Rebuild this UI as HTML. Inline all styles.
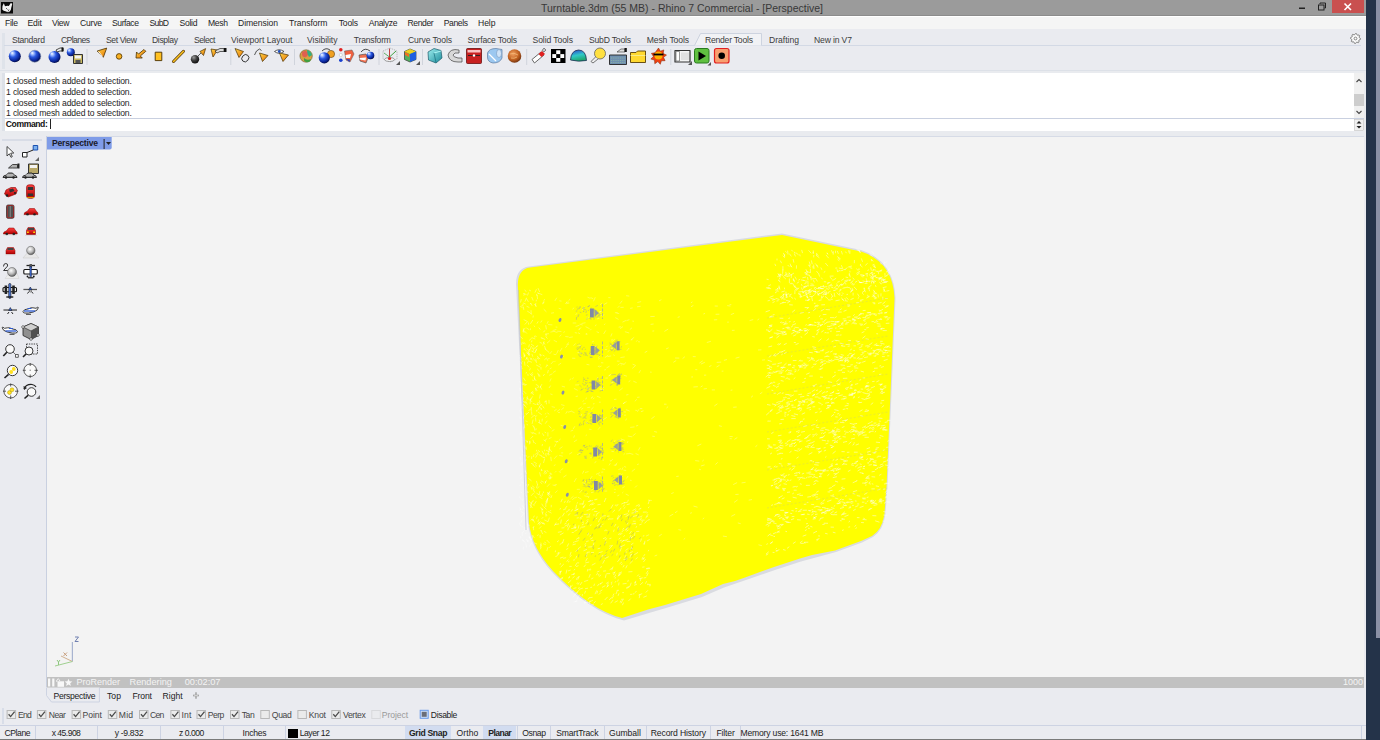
<!DOCTYPE html>
<html><head><meta charset="utf-8">
<style>
*{margin:0;padding:0;box-sizing:border-box}
html,body{width:1380px;height:740px;overflow:hidden;background:#243349}
body{position:relative;font-family:"Liberation Sans",sans-serif;color:#1e1e1e}
.a{position:absolute}
.t{position:absolute;white-space:nowrap}
svg{position:absolute;left:0;top:0;overflow:visible}
</style></head><body>
<div class="a" style="left:1376px;top:0px;width:4px;height:638px;background:#8a90a5;"></div><div class="a" style="left:0px;top:0px;width:1366px;height:740px;background:#eaebf0;"></div><div class="a" style="left:0px;top:0px;width:1366px;height:16px;background:#9b9b9b;"></div><div class="t" style="left:541.00px;top:3.17px;font-size:10.5px;line-height:10.5px;font-weight:normal;color:#383838;">Turntable.3dm (55 MB) - Rhino 7 Commercial - [Perspective]</div><div class="a" style="left:0px;top:16px;width:1366px;height:13px;background:#f5f5f5;"></div><div class="a" style="left:0px;top:15px;width:1366px;height:1px;background:#8c8c8c;"></div><div class="a" style="left:0px;top:16px;width:1366px;height:1px;background:#ffffff;"></div><div class="t" style="left:5.00px;top:19.20px;font-size:8.6px;line-height:8.6px;font-weight:normal;color:#1e1e1e;letter-spacing:-0.282px;">File</div><div class="t" style="left:27.50px;top:19.20px;font-size:8.6px;line-height:8.6px;font-weight:normal;color:#1e1e1e;letter-spacing:-0.112px;">Edit</div><div class="t" style="left:52.00px;top:19.20px;font-size:8.6px;line-height:8.6px;font-weight:normal;color:#1e1e1e;letter-spacing:-0.330px;">View</div><div class="t" style="left:80.00px;top:19.20px;font-size:8.6px;line-height:8.6px;font-weight:normal;color:#1e1e1e;letter-spacing:-0.240px;">Curve</div><div class="t" style="left:112.00px;top:19.20px;font-size:8.6px;line-height:8.6px;font-weight:normal;color:#1e1e1e;letter-spacing:-0.438px;">Surface</div><div class="t" style="left:149.50px;top:19.20px;font-size:8.6px;line-height:8.6px;font-weight:normal;color:#1e1e1e;letter-spacing:-0.667px;">SubD</div><div class="t" style="left:179.50px;top:19.20px;font-size:8.6px;line-height:8.6px;font-weight:normal;color:#1e1e1e;letter-spacing:-0.284px;">Solid</div><div class="t" style="left:208.00px;top:19.20px;font-size:8.6px;line-height:8.6px;font-weight:normal;color:#1e1e1e;letter-spacing:-0.342px;">Mesh</div><div class="t" style="left:238.00px;top:19.20px;font-size:8.6px;line-height:8.6px;font-weight:normal;color:#1e1e1e;letter-spacing:-0.079px;">Dimension</div><div class="t" style="left:289.00px;top:19.20px;font-size:8.6px;line-height:8.6px;font-weight:normal;color:#1e1e1e;letter-spacing:-0.046px;">Transform</div><div class="t" style="left:338.75px;top:19.20px;font-size:8.6px;line-height:8.6px;font-weight:normal;color:#1e1e1e;letter-spacing:-0.208px;">Tools</div><div class="t" style="left:368.75px;top:19.20px;font-size:8.6px;line-height:8.6px;font-weight:normal;color:#1e1e1e;letter-spacing:-0.311px;">Analyze</div><div class="t" style="left:407.50px;top:19.20px;font-size:8.6px;line-height:8.6px;font-weight:normal;color:#1e1e1e;letter-spacing:-0.392px;">Render</div><div class="t" style="left:443.75px;top:19.20px;font-size:8.6px;line-height:8.6px;font-weight:normal;color:#1e1e1e;letter-spacing:-0.413px;">Panels</div><div class="t" style="left:478.00px;top:19.20px;font-size:8.6px;line-height:8.6px;font-weight:normal;color:#1e1e1e;letter-spacing:-0.058px;">Help</div><div class="a" style="left:0px;top:29px;width:1366px;height:42px;background:#eaebf0;"></div><div class="a" style="left:2px;top:33px;width:3px;height:36px;background:#dfe3ea;"></div><div class="a" style="left:4px;top:45px;width:1357px;height:1px;background:#d3d9e5;"></div><div class="a" style="left:0px;top:70px;width:1366px;height:1px;background:#dde1e8;"></div><svg width="1380" height="740"><path d="M694.5 45.5 L700.5 33.5 L761.5 33.5 L761.5 45.5" fill="#f1f2f5" stroke="#cdd3df" stroke-width="1"/></svg><div class="t" style="left:12.00px;top:35.80px;font-size:8.6px;line-height:8.6px;font-weight:normal;color:#3c3c3c;letter-spacing:-0.274px;">Standard</div><div class="t" style="left:61.00px;top:35.80px;font-size:8.6px;line-height:8.6px;font-weight:normal;color:#3c3c3c;letter-spacing:-0.585px;">CPlanes</div><div class="t" style="left:106.00px;top:35.80px;font-size:8.6px;line-height:8.6px;font-weight:normal;color:#3c3c3c;letter-spacing:-0.400px;">Set View</div><div class="t" style="left:152.00px;top:35.80px;font-size:8.6px;line-height:8.6px;font-weight:normal;color:#3c3c3c;letter-spacing:-0.368px;">Display</div><div class="t" style="left:194.00px;top:35.80px;font-size:8.6px;line-height:8.6px;font-weight:normal;color:#3c3c3c;letter-spacing:-0.482px;">Select</div><div class="t" style="left:231.00px;top:35.80px;font-size:8.6px;line-height:8.6px;font-weight:normal;color:#3c3c3c;letter-spacing:-0.002px;">Viewport Layout</div><div class="t" style="left:307.00px;top:35.80px;font-size:8.6px;line-height:8.6px;font-weight:normal;color:#3c3c3c;letter-spacing:-0.046px;">Visibility</div><div class="t" style="left:353.75px;top:35.80px;font-size:8.6px;line-height:8.6px;font-weight:normal;color:#3c3c3c;letter-spacing:-0.203px;">Transform</div><div class="t" style="left:408.00px;top:35.80px;font-size:8.6px;line-height:8.6px;font-weight:normal;color:#3c3c3c;letter-spacing:-0.124px;">Curve Tools</div><div class="t" style="left:467.50px;top:35.80px;font-size:8.6px;line-height:8.6px;font-weight:normal;color:#3c3c3c;letter-spacing:-0.204px;">Surface Tools</div><div class="t" style="left:532.50px;top:35.80px;font-size:8.6px;line-height:8.6px;font-weight:normal;color:#3c3c3c;letter-spacing:-0.095px;">Solid Tools</div><div class="t" style="left:589.00px;top:35.80px;font-size:8.6px;line-height:8.6px;font-weight:normal;color:#3c3c3c;letter-spacing:-0.202px;">SubD Tools</div><div class="t" style="left:646.75px;top:35.80px;font-size:8.6px;line-height:8.6px;font-weight:normal;color:#3c3c3c;letter-spacing:-0.122px;">Mesh Tools</div><div class="t" style="left:705.00px;top:35.80px;font-size:8.6px;line-height:8.6px;font-weight:normal;color:#3c3c3c;letter-spacing:-0.230px;">Render Tools</div><div class="t" style="left:769.00px;top:35.80px;font-size:8.6px;line-height:8.6px;font-weight:normal;color:#3c3c3c;letter-spacing:-0.014px;">Drafting</div><div class="t" style="left:814.00px;top:35.80px;font-size:8.6px;line-height:8.6px;font-weight:normal;color:#3c3c3c;letter-spacing:-0.152px;">New in V7</div><div class="a" style="left:0px;top:71px;width:1366px;height:65px;background:#e9ebef;"></div><div class="a" style="left:2px;top:73px;width:3px;height:58px;background:#dde1e8;"></div><div class="a" style="left:5px;top:73px;width:1359px;height:45px;background:#ffffff;"></div><div class="a" style="left:5px;top:118px;width:1359px;height:1px;background:#c9d0e0;"></div><div class="a" style="left:5px;top:119px;width:1359px;height:12px;background:#ffffff;"></div><div class="a" style="left:1354px;top:73px;width:10px;height:45px;background:#f0f0f0;"></div><div class="t" style="left:6.00px;top:76.80px;font-size:8.6px;line-height:8.6px;font-weight:normal;color:#1e1e1e;letter-spacing:-0.126px;">1 closed mesh added to selection.</div><div class="t" style="left:6.00px;top:88.00px;font-size:8.6px;line-height:8.6px;font-weight:normal;color:#1e1e1e;letter-spacing:-0.126px;">1 closed mesh added to selection.</div><div class="t" style="left:6.00px;top:98.50px;font-size:8.6px;line-height:8.6px;font-weight:normal;color:#1e1e1e;letter-spacing:-0.126px;">1 closed mesh added to selection.</div><div class="t" style="left:6.00px;top:108.70px;font-size:8.6px;line-height:8.6px;font-weight:normal;color:#1e1e1e;letter-spacing:-0.126px;">1 closed mesh added to selection.</div><div class="t" style="left:5.80px;top:119.80px;font-size:8.6px;line-height:8.6px;font-weight:bold;color:#111;letter-spacing:-0.413px;">Command:</div><div class="a" style="left:50px;top:119px;width:1px;height:10px;background:#222;"></div><svg width="1380" height="740">
<defs>
<radialGradient id="gb" cx="40%" cy="38%" r="65%" fx="28%" fy="22%"><stop offset="0" stop-color="#ffffff"/><stop offset="0.2" stop-color="#9ab8ff"/><stop offset="0.45" stop-color="#2a58e0"/><stop offset="0.8" stop-color="#0a2496"/><stop offset="1" stop-color="#030a40"/></radialGradient>
<radialGradient id="gk" cx="35%" cy="30%" r="70%"><stop offset="0" stop-color="#9a9a9a"/><stop offset="0.5" stop-color="#404040"/><stop offset="1" stop-color="#111"/></radialGradient>
<radialGradient id="go" cx="40%" cy="35%" r="70%"><stop offset="0" stop-color="#f0a060"/><stop offset="0.6" stop-color="#c06020"/><stop offset="1" stop-color="#6a3010"/></radialGradient>
<radialGradient id="gw" cx="35%" cy="30%" r="70%"><stop offset="0" stop-color="#ffffff"/><stop offset="0.6" stop-color="#c8c8c8"/><stop offset="1" stop-color="#707070"/></radialGradient>
<linearGradient id="gy" x1="0" y1="0" x2="1" y2="1"><stop offset="0" stop-color="#ffd84a"/><stop offset="1" stop-color="#e87000"/></linearGradient>
<linearGradient id="gt" x1="0" y1="0" x2="1" y2="1"><stop offset="0" stop-color="#9ff0f0"/><stop offset="1" stop-color="#1a8a9a"/></linearGradient>
</defs>
<g stroke-linejoin="round">
<circle cx="14.8" cy="56.2" r="6" fill="url(#gb)"/>
<circle cx="34.8" cy="56.2" r="6" fill="url(#gb)" stroke="#8090b0" stroke-width="0.6"/>
<circle cx="54.5" cy="57" r="6" fill="url(#gb)"/>
<path d="M56 50 l4 -2 l3 0 l0 3 l-3 0 l-3 1z" fill="#eee" stroke="#222" stroke-width="0.8"/><rect x="61.5" y="47.5" width="2" height="4" fill="#111"/>
<circle cx="70.8" cy="52.3" r="4" fill="url(#gb)"/>
<rect x="73.5" y="54.5" width="9" height="9" fill="#c8b860" stroke="#333" stroke-width="1"/><rect x="75" y="55.5" width="6" height="3" fill="#f4f4f4"/><rect x="75.5" y="60" width="5" height="3" fill="#555"/>
<rect x="86.5" y="49" width="1" height="16" fill="#d0d4dc"/>
<path d="M97.2 51 L106.7 48.1 L103.3 57.3 Z" fill="url(#gy)" stroke="#4a3000" stroke-width="0.8"/><path d="M98.5 51.5 L102.5 56.5" stroke="#fff" stroke-width="1"/>
<circle cx="119.1" cy="56.4" r="2.8" fill="#f8b020" stroke="#4a3000" stroke-width="0.8"/>
<path d="M136 58 L136.5 52 L138.5 54 L144 49.5 L145.8 51.3 L140.3 56 L142.3 58 Z" fill="url(#gy)" stroke="#4a3000" stroke-width="0.8"/>
<rect x="155.2" y="52.2" width="6.6" height="8.4" fill="#ffc020" stroke="#4a3000" stroke-width="0.9"/>
<path d="M173.5 61.5 L183.5 51.3" stroke="#5a3a08" stroke-width="3" stroke-linecap="round"/><path d="M173.5 61.5 L183.5 51.3" stroke="#f8c020" stroke-width="1.6" stroke-linecap="round"/>
<circle cx="195" cy="59.2" r="4.2" fill="url(#gk)"/><path d="M197 57 L202 52" stroke="#333" stroke-width="0.8"/>
<path d="M200 51.5 L205.6 48.6 L203.5 55.5 Z" fill="url(#gy)" stroke="#4a3000" stroke-width="0.7"/>
<path d="M211 49 L217.5 50 L213 57 Z" fill="url(#gy)" stroke="#4a3000" stroke-width="0.7"/><path d="M215 51 l5 -2.5 l4 0 l0 3 l-4 0 l-3 1.5z" fill="#ddd" stroke="#222" stroke-width="0.7"/><rect x="224" y="48" width="2.5" height="4" fill="#111"/>
<rect x="230.3" y="49" width="1" height="16" fill="#d0d4dc"/>
<path d="M235 48.5 L243.5 51.5 L239 57.5 Z" fill="url(#gy)" stroke="#4a3000" stroke-width="0.7"/><ellipse cx="245.3" cy="58.2" rx="3.3" ry="3.8" fill="none" stroke="#333" stroke-width="0.9" transform="rotate(40 245.3 58.2)"/>
<path d="M254.5 55 l2 -4 l3 -2 l2 1.5" fill="none" stroke="#444" stroke-width="0.9"/><path d="M259.5 53 L268 55.5 L262.5 61.5 Z" fill="url(#gy)" stroke="#4a3000" stroke-width="0.7"/>
<path d="M274.5 51.5 Q279 48 284 51.5 Q279 55 274.5 51.5Z" fill="#fff" stroke="#333" stroke-width="0.8"/><circle cx="279.3" cy="51.5" r="1.4" fill="#2050c0"/><path d="M279.5 53 L288.5 55 L283 61.5 Z" fill="url(#gy)" stroke="#4a3000" stroke-width="0.7"/>
<rect x="294" y="49" width="1" height="16" fill="#d0d4dc"/>
<circle cx="306.1" cy="56" r="6.2" fill="#d8a040" stroke="#6a5a30" stroke-width="0.6"/><path d="M302 52 q3 -2 6 0 q1 3 -2 5 q-3 1 -4 -2z" fill="#e06050"/><path d="M307 50 q4 1 5 5 l-3 2 q-2 -3 -2 -7z" fill="#30b080"/><path d="M304 58 q3 3 7 1 l-1 2.5 q-4 2 -6 -1z" fill="#40a040"/>
<circle cx="331" cy="54" r="3.6" fill="#f0a020" stroke="#604010" stroke-width="0.6"/><circle cx="324.3" cy="57.8" r="5.6" fill="url(#gb)"/><path d="M322 51 q4 -4 8 -1" fill="none" stroke="#222" stroke-width="0.8"/>
<circle cx="340.8" cy="49.8" r="1.8" fill="#e02020"/><circle cx="340.8" cy="55" r="1.6" fill="#fff" stroke="#aaa" stroke-width="0.4"/><circle cx="340.8" cy="60.3" r="1.8" fill="#1840d0"/>
<path d="M344.5 51 L352 50 L354 54 L350 62 L346 60 Z" fill="#f06040" stroke="#555" stroke-width="0.5"/><path d="M345.5 55 L351 54 L350 58 L346 58Z" fill="#fff"/><path d="M346 59 L350 59.5 L349.5 62 Z" fill="#2040c0"/>
<path d="M359 55 L366 54 L368 58 L366 63 L360 61 Z" fill="#f07050" stroke="#444" stroke-width="0.6"/><path d="M359.5 58 L366 57.5 L365.5 60.5 L360 59.5Z" fill="#fff"/><circle cx="370.5" cy="55.5" r="3.8" fill="url(#gb)"/><path d="M361 52 q4 -5 9 -1" fill="none" stroke="#222" stroke-width="0.8"/>
<rect x="378.5" y="49" width="1" height="16" fill="#d0d4dc"/>
<path d="M383 51 L390 48 L397 51 L397 59 L390 62 L383 59Z" fill="none" stroke="#888" stroke-width="0.6" stroke-dasharray="1 1"/><path d="M389.5 57 L389.5 48.5" stroke="#c04040" stroke-width="1"/><path d="M389.5 57 L396 51" stroke="#40a040" stroke-width="1"/><path d="M389.5 57 L384 53" stroke="#40a040" stroke-width="0.8"/><ellipse cx="389.5" cy="59.5" rx="5" ry="2" fill="#f4f4f4" stroke="#666" stroke-width="0.6"/><circle cx="389.5" cy="58.5" r="1.6" fill="#e02020"/>
<path d="M396 65 L400 61 L400 65Z" fill="#555"/>
<path d="M404.5 51.5 L410 49 L416 51.5 L416 59.5 L410 62 L404.5 59.5Z" fill="#50b060" stroke="#333" stroke-width="0.7"/><path d="M404.5 51.5 L410 49 L416 51.5 L410 54Z" fill="#f0d020"/><path d="M410 54 L416 51.5 L416 59.5 L410 62Z" fill="#2060e0"/><path d="M405 52 L409 54 L409 57 L405 55Z" fill="#f07020"/>
<path d="M416 65 L420 61 L420 65Z" fill="#555"/>
<rect x="422" y="49" width="1" height="16" fill="#d0d4dc"/>
<path d="M428 52 L434 48.5 L441 50.5 L442 58 L436 63 L428.5 60Z" fill="url(#gt)" stroke="#1a5a6a" stroke-width="0.7"/><path d="M434 53 L441 51" stroke="#c0ffff" stroke-width="0.8"/><path d="M434 53 L436 62.5" stroke="#106070" stroke-width="0.6"/>
<path d="M459 50 Q450 48 448 55 Q449 62 458 62 L462 62 L462 58 L458 58 Q453 57 453 55 Q454 52 459 53Z" fill="#d8d8d8" stroke="#555" stroke-width="0.8"/>
<rect x="466.5" y="48.5" width="15" height="15" rx="1" fill="#c82020" stroke="#6a1010" stroke-width="0.8"/><rect x="467.5" y="50" width="13" height="2.5" fill="#f8c0c0"/><path d="M468 55.5 h12" stroke="#222" stroke-width="0.9"/><circle cx="474" cy="55.5" r="1.2" fill="#fff"/>
<path d="M487.5 53 Q489 48.5 496 48.5 L502 49.5 L502 58 Q500 63 493 63 Q487.5 62 487.5 57Z" fill="#9cc8f0" stroke="#5a7aa0" stroke-width="0.7"/><path d="M489 54 L496 61" stroke="#fff" stroke-width="1.2"/><ellipse cx="499" cy="53.5" rx="2.5" ry="4" fill="#d0e4f8" stroke="#6a8ab0" stroke-width="0.5"/>
<circle cx="514.5" cy="56" r="6.8" fill="url(#go)"/><path d="M510 54 q4 -2 8 1 M511 58 q3 1 6 -1" stroke="#f8c080" stroke-width="0.7" fill="none"/>
<rect x="526.2" y="49" width="1" height="16" fill="#d0d4dc"/>
<path d="M532 59.5 L541 52 L544 55 L534.5 63Z" fill="#fff" stroke="#444" stroke-width="0.8"/><path d="M538.5 54 L542 51 L545 54 L541.5 57Z" fill="#e02020"/><path d="M542 50.5 l2 -2.5 l2 2 l-2 2z" fill="#ccc" stroke="#444" stroke-width="0.6"/>
<rect x="551" y="49" width="14.5" height="14" fill="#000"/><rect x="556.2" y="50.3" width="4.1" height="3.8" fill="#fff"/><rect x="552.3" y="54.1" width="3.9" height="3.9" fill="#fff"/><rect x="560.3" y="54.1" width="3.9" height="3.9" fill="#fff"/><rect x="556.2" y="58" width="4.1" height="3.8" fill="#fff"/>
<linearGradient id="gd" x1="0" y1="0" x2="0.3" y2="1"><stop offset="0" stop-color="#2a40d0"/><stop offset="0.55" stop-color="#30c8c8"/><stop offset="1" stop-color="#20a870"/></linearGradient><path d="M570.5 60 Q571 50.5 578.5 50 Q586 50 586.5 60.5 Q578 62 570.5 60Z" fill="url(#gd)" stroke="#1a2a50" stroke-width="0.8"/>
<circle cx="600" cy="53.5" r="5.5" fill="#ffe040" stroke="#606060" stroke-width="0.8"/><path d="M595.5 57 L591 61.5 L593 63 L598 59" fill="#eee" stroke="#555" stroke-width="0.8"/>
<rect x="609.5" y="55" width="17" height="9.5" fill="#7090b0" stroke="#222" stroke-width="0.9"/><path d="M611 58 h14 M611 60.5 h14 M611 62.5 h14" stroke="#a0d0a0" stroke-width="0.5" stroke-dasharray="1 0.8"/><path d="M617 52 l4 -3 l4 0 l0 3 l-4 0z" fill="#ddd" stroke="#333" stroke-width="0.6"/><rect x="624.5" y="48" width="2.3" height="4" fill="#111"/>
<path d="M630.5 52.5 L636 52.5 L637.5 51 L645.5 51 L645.5 62.5 L630.5 62.5Z" fill="#ffd830" stroke="#5a4008" stroke-width="0.9"/><path d="M630.5 55.5 h15" stroke="#f8f0a0" stroke-width="0.8"/>
<path d="M658.5 48 l1.8 3.2 l3.5 -1.3 l-0.6 3.6 l3.3 1.6 l-3 2.2 l1.6 3.4 l-3.7 0.1 l-1.1 3.5 l-2.5 -2.7 l-3 2.2 l-0.3 -3.700 l-3.6 -1 l2.5 -2.7 l-2 -3.1 l3.6 -0.5z" fill="#f04010" stroke="#802000" stroke-width="0.5"/><circle cx="658.5" cy="55.5" r="4" fill="#ffb000"/><path d="M653.5 54.5 h10" stroke="#000" stroke-width="1.8"/>
<rect x="670.3" y="49" width="1" height="16" fill="#d0d4dc"/>
<rect x="675" y="50.5" width="15" height="11.5" fill="#f4f4f4" stroke="#333" stroke-width="1.2"/><rect x="676" y="51.5" width="3.5" height="9.5" fill="#fff" stroke="#555" stroke-width="0.6"/><rect x="681" y="52.5" width="8" height="7.5" fill="#e0e0e0"/>
<path d="M688 65 L692 61 L692 65Z" fill="#555"/>
<rect x="694.5" y="48.5" width="14.5" height="14.5" rx="2" fill="#60c040" stroke="#2a7a20" stroke-width="1"/><path d="M698.5 51.5 L706 56 L698.5 60.5Z" fill="#000"/>
<path d="M707.5 65.5 L711 62 L711 65.5Z" fill="#555"/>
<rect x="714.5" y="48.5" width="14.5" height="14.5" rx="2" fill="#f8a070" stroke="#e02020" stroke-width="1.2"/><circle cx="721.7" cy="55.7" r="3.3" fill="#000"/>
<path d="M1355.50 33.50 L1356.48 33.60 L1356.99 34.90 L1357.67 35.26 L1359.04 34.96 L1359.66 35.72 L1359.10 37.01 L1359.33 37.74 L1360.50 38.50 L1360.40 39.48 L1359.10 39.99 L1358.74 40.67 L1359.04 42.04 L1358.28 42.66 L1356.99 42.10 L1356.26 42.33 L1355.50 43.50 L1354.52 43.40 L1354.01 42.10 L1353.33 41.74 L1351.96 42.04 L1351.34 41.28 L1351.90 39.99 L1351.67 39.26 L1350.50 38.50 L1350.60 37.52 L1351.90 37.01 L1352.26 36.33 L1351.96 34.96 L1352.72 34.34 L1354.01 34.90 L1354.74 34.67Z" fill="#fafafa" stroke="#7a7a7a" stroke-width="0.9"/><circle cx="1355.5" cy="38.5" r="1.4" fill="none" stroke="#7a7a7a" stroke-width="0.9"/>
</g>
<rect x="1332" y="0" width="32" height="13" fill="#c9504f"/>
<path d="M1344.5 3.5 L1351 10 M1351 3.5 L1344.5 10" stroke="#fff" stroke-width="1.6"/><rect x="1299" y="7.5" width="6" height="1.5" fill="#222"/><rect x="1318.5" y="5" width="5.5" height="5" fill="none" stroke="#222" stroke-width="1"/><path d="M1320 4 v-1 h5.5 v5 h-1" fill="none" stroke="#222" stroke-width="1"/>
<rect x="1" y="2" width="12" height="11.5" fill="#0a0a0a"/><path d="M2.3 9.5 Q2 5.5 3.8 3.2 L5 6.3 Q7 5.2 8.8 6 L10.8 3 L12.3 3.8 L11.2 8 Q11 11.5 8 12.2 L5.5 11.3 Q3.5 11 2.3 9.5Z" fill="#f2f2f2"/><path d="M6 8 l1.5 1.5 M9 9.5 l-1 2" stroke="#222" stroke-width="0.7"/>
</svg>
<div class="a" style="left:46px;top:136px;width:1318px;height:541px;background:#f3f3f3;"></div><div class="a" style="left:46px;top:136px;width:1318px;height:1px;background:#d6dbe6;"></div><div class="a" style="left:46px;top:136px;width:1px;height:551px;background:#c9d0e0;"></div><svg width="1380" height="740"><path d="M47 137 H111.7 V147.6 Q111.7 149.6 109.7 149.6 H47Z" fill="#7f9ce8"/><rect x="103.6" y="139" width="1" height="10" fill="#222"/><path d="M106 142 h5 l-2.5 3z" fill="#222"/></svg><div class="t" style="left:52.00px;top:139.40px;font-size:8.6px;line-height:8.6px;font-weight:bold;color:#1a1a2a;letter-spacing:-0.229px;">Perspective</div><div class="a" style="left:46.5px;top:677px;width:1317.5px;height:10.5px;background:#c1c1c1;"></div><div class="t" style="left:76.50px;top:677.80px;font-size:9.0px;line-height:9.0px;font-weight:normal;color:#f4f4f4;">ProRender</div><div class="t" style="left:129.50px;top:677.71px;font-size:9.2px;line-height:9.2px;font-weight:normal;color:#f4f4f4;">Rendering</div><div class="t" style="left:184.70px;top:677.71px;font-size:9.2px;line-height:9.2px;font-weight:normal;color:#f4f4f4;">00:02:07</div><div class="t" style="left:1343.00px;top:677.80px;font-size:9.0px;line-height:9.0px;font-weight:normal;color:#f4f4f4;">1000</div><svg width="1380" height="740"><rect x="48" y="678.5" width="2.2" height="8" fill="#f8f8f8"/><rect x="52.2" y="678.5" width="2.2" height="8" fill="#f8f8f8"/><rect x="57.5" y="681.3" width="6.5" height="5.5" fill="#f8f8f8"/><path d="M56.8 682 v-2 q1.3 -2.5 2.8 0 v1" fill="none" stroke="#f8f8f8" stroke-width="0.9"/><path d="M68.5 678.8 l1.1 2.5 l2.8 0.2 l-2.2 1.8 l0.7 2.8 l-2.4 -1.5 l-2.4 1.5 l0.7 -2.8 l-2.2 -1.8 l2.8 -0.2z" fill="#f8f8f8"/></svg><svg width="1380" height="740"><path d="M46.5 687.5 V695.5 L51.5 702 H99.4 V687.5" fill="#eaebf0" stroke="#cdd3e2" stroke-width="1"/><path d="M193 695.5 h6 M196 692.5 v6" stroke="#888" stroke-width="1.6"/><path d="M193.5 695.5 h5 M196 693 v5" stroke="#f0f0f0" stroke-width="0.6"/></svg><div class="t" style="left:53.60px;top:691.60px;font-size:8.6px;line-height:8.6px;font-weight:normal;color:#222;letter-spacing:-0.293px;">Perspective</div><div class="t" style="left:107.00px;top:691.60px;font-size:8.6px;line-height:8.6px;font-weight:normal;color:#222;letter-spacing:0.077px;">Top</div><div class="t" style="left:132.50px;top:691.60px;font-size:8.6px;line-height:8.6px;font-weight:normal;color:#222;letter-spacing:-0.145px;">Front</div><div class="t" style="left:162.60px;top:691.60px;font-size:8.6px;line-height:8.6px;font-weight:normal;color:#222;letter-spacing:-0.020px;">Right</div><div class="a" style="left:2px;top:139px;width:40px;height:1.5px;background:#d8dce6;"></div><svg width="1380" height="740">
<defs>
<linearGradient id="car" x1="0" y1="0" x2="0" y2="1"><stop offset="0" stop-color="#ff4040"/><stop offset="1" stop-color="#b00000"/></linearGradient>
<radialGradient id="gs" cx="40%" cy="35%" r="65%"><stop offset="0" stop-color="#ffffff"/><stop offset="0.6" stop-color="#b8b8b8"/><stop offset="1" stop-color="#606060"/></radialGradient>
</defs>
<g stroke-linejoin="round">
<!-- row1 -->
<path d="M7 146.5 L7 156 L9.3 153.8 L11 157.3 L12.3 156.6 L10.7 153.2 L13.8 153 Z" fill="#fff" stroke="#333" stroke-width="0.9"/>
<rect x="22.5" y="152.5" width="4.5" height="4.5" fill="#fff" stroke="#222" stroke-width="1"/><rect x="33.2" y="145.5" width="4.5" height="4.5" fill="#7ab0f0" stroke="#1a50b0" stroke-width="1"/><path d="M27 152.5 L33.2 150" stroke="#222" stroke-width="1"/>
<path d="M35 161 L39 157 L39 161Z" fill="#666"/>
<!-- row2 -->
<path d="M8.5 168 l4 -3.5 l5 0 l0 3.5 l-5 0z" fill="#b0b0b0" stroke="#333" stroke-width="0.9"/><rect x="17.5" y="163.5" width="2" height="5" fill="#222"/>
<path d="M3 177.5 q0 -2 3 -2.3 l2.5 -2.2 l4 0 l2 2.2 q2.5 0.3 2.5 2.3z" fill="#909090" stroke="#222" stroke-width="0.9"/><path d="M6.5 175 h7" stroke="#e8e8e8" stroke-width="0.8"/><circle cx="6" cy="177.5" r="1.2" fill="#222"/><circle cx="13.5" cy="177.5" r="1.2" fill="#222"/>
<rect x="28.5" y="164" width="10" height="9.5" fill="#b8a868" stroke="#333" stroke-width="1"/><rect x="30" y="165" width="7" height="3" fill="#f4f4f4"/>
<path d="M22.5 177.5 q0 -2 3 -2.3 l2.5 -2.2 l4 0 l2 2.2 q2.5 0.3 2.5 2.3z" fill="#909090" stroke="#222" stroke-width="0.9"/><path d="M26 175 h7" stroke="#e8e8e8" stroke-width="0.8"/><circle cx="25.5" cy="177.5" r="1.2" fill="#222"/><circle cx="33" cy="177.5" r="1.2" fill="#222"/>
<!-- row3 -->
<path d="M4.5 194 L6 190 L11 187.5 L15.5 187.5 L17.3 190.5 L16 194 L8 197Z" fill="url(#car)" stroke="#800" stroke-width="0.6"/><path d="M9 189.5 L13 188.5 L14.5 191 L10 192.5Z" fill="#333"/><circle cx="7" cy="195.5" r="1.2" fill="#222"/><circle cx="15" cy="193" r="1.1" fill="#222"/>
<rect x="26.5" y="184.8" width="8" height="13.5" rx="2.5" fill="url(#car)" stroke="#800" stroke-width="0.6"/><rect x="27.8" y="187" width="5.4" height="3" fill="#333"/><rect x="27.8" y="193.5" width="5.4" height="2.5" fill="#333"/><path d="M27 197.5 h7" stroke="#f0c000" stroke-width="0.8"/>
<!-- row4 -->
<rect x="6.5" y="205" width="7.5" height="13.3" rx="1.5" fill="#d02020" stroke="#333" stroke-width="0.8"/><rect x="7.5" y="206" width="5.5" height="11.3" fill="#505050"/><path d="M10.25 206 v11.3" stroke="#aaa" stroke-width="0.6"/>
<path d="M24 214.5 q0 -2.5 3 -3 l2.5 -3 l5 0 l2 3 q1.5 0.3 1.5 3z" fill="url(#car)" stroke="#800" stroke-width="0.5"/><circle cx="27.5" cy="214.5" r="1.3" fill="#222"/><circle cx="34.5" cy="214.5" r="1.3" fill="#222"/><path d="M23 215.5 h15" stroke="#d8d8d8" stroke-width="0.5"/>
<!-- row5 -->
<path d="M3.3 234 q0 -2.5 3 -3 l2.5 -3 l5 0 l2 3 q1.5 0.3 1.5 3z" fill="url(#car)" stroke="#800" stroke-width="0.5"/><circle cx="6.8" cy="234" r="1.3" fill="#222"/><circle cx="13.8" cy="234" r="1.3" fill="#222"/><path d="M3 235.3 h14" stroke="#d8d8d8" stroke-width="0.5"/>
<path d="M26.5 234.5 v-4 l1.5 -3 h6 l1.5 3 v4z" fill="url(#car)" stroke="#800" stroke-width="0.5"/><rect x="28" y="228" width="6" height="2" fill="#444"/><rect x="27" y="231.5" width="1.8" height="1.5" fill="#ffd000"/><rect x="33.2" y="231.5" width="1.8" height="1.5" fill="#ffd000"/><path d="M25 235.5 h12" stroke="#d0d0d0" stroke-width="0.6"/>
<!-- row6 -->
<path d="M6 254 v-3.5 l1.5 -3 h6 l1.5 3 v3.5z" fill="url(#car)" stroke="#800" stroke-width="0.5"/><rect x="7.5" y="248" width="6" height="2" fill="#444"/><path d="M5 254.8 h11" stroke="#d0d0d0" stroke-width="0.6"/>
<path d="M23 258 L28 252 L34 252 L39 258Z" fill="#e8e8e8" stroke="#c8c8c8" stroke-width="0.5"/><circle cx="30.8" cy="250.5" r="4.2" fill="url(#gs)" stroke="#555" stroke-width="0.5"/>
<!-- row7 -->
<path d="M3.5 266.5 q0 -3 2.3 -3 q2.3 0 1.8 2.5 l-4 4.5 h4.3" fill="none" stroke="#222" stroke-width="0.9"/><path d="M5 278.5 L9 273 L17 273 L19 278.5Z" fill="#ececec" stroke="#d0d0d0" stroke-width="0.5"/><circle cx="12" cy="272" r="4.5" fill="url(#gs)" stroke="#555" stroke-width="0.5"/>
<path d="M26.5 265.5 h8.5" stroke="#222" stroke-width="1.3"/><rect x="29.5" y="264" width="2.5" height="4" fill="#555"/>
<rect x="23.8" y="269.5" width="13.5" height="4.5" rx="1" fill="#fff" stroke="#111" stroke-width="1.1"/><rect x="29.8" y="266.5" width="1.8" height="10" fill="#3a68d8" stroke="#111" stroke-width="0.4"/>
<path d="M28 277.8 h5.5" stroke="#111" stroke-width="1.2"/><circle cx="27.5" cy="276.5" r="0.9" fill="#111"/><circle cx="33.8" cy="276.5" r="0.9" fill="#111"/>
<!-- row8 -->
<rect x="3" y="287.5" width="13.5" height="4.2" rx="1" fill="#fff" stroke="#111" stroke-width="1.1"/>
<rect x="4.6" y="285.5" width="2.6" height="8.5" fill="#222"/><rect x="12.2" y="285.5" width="2.6" height="8.5" fill="#222"/>
<rect x="8.7" y="283.5" width="2.2" height="15" rx="1" fill="#4a78e0" stroke="#111" stroke-width="0.6"/>
<path d="M6.3 297 h7" stroke="#111" stroke-width="1.3"/>
<path d="M23.5 289.5 h13.5" stroke="#333" stroke-width="1.2"/><path d="M23.5 289.3 h13.5" stroke="#aaa" stroke-width="0.4"/><path d="M30.3 287 l1.7 3 h-3.4z" fill="#3a68d8" stroke="#111" stroke-width="0.5"/><path d="M27.5 293.5 l1.5 -2 M33 293.5 l-1.5 -2" stroke="#111" stroke-width="0.9"/><circle cx="30.3" cy="291" r="1" fill="#fff" stroke="#111" stroke-width="0.5"/>
<!-- row9 -->
<path d="M3.5 310 h13.5" stroke="#333" stroke-width="1.2"/><path d="M3.5 309.8 h13.5" stroke="#aaa" stroke-width="0.4"/><path d="M10.3 307.5 l1.7 3 h-3.4z" fill="#3a68d8" stroke="#111" stroke-width="0.5"/><path d="M7.5 314 l1.5 -2 M13 314 l-1.5 -2" stroke="#111" stroke-width="0.9"/>
<path d="M23 311.5 q1 -2.5 5 -2.5 l3 -1.2 h2 l3 0.5 l1.8 -1.3 l0.5 0.8 l-1.5 2.5 q-3 2.2 -8.5 2.7 h-3.5 q-1.8 -0.2 -1.8 -1.5z" fill="#fff" stroke="#111" stroke-width="0.8"/><path d="M24 311 h11" stroke="#2a58d0" stroke-width="1.3"/><path d="M27.5 308.5 h4" stroke="#2a58d0" stroke-width="1"/><path d="M26 314.3 h5" stroke="#111" stroke-width="0.8"/>
<!-- row10 -->
<path d="M17.5 331.5 q-1 -2.5 -5 -2.5 l-3 -1.2 h-2 l-3 0.5 l-1.8 -1.3 l-0.5 0.8 l1.5 2.5 q3 2.2 8.5 2.7 h3.5 q1.8 -0.2 1.8 -1.5z" fill="#fff" stroke="#111" stroke-width="0.8"/><path d="M16.5 331 h-11" stroke="#2a58d0" stroke-width="1.3"/><path d="M13 328.5 h-4" stroke="#2a58d0" stroke-width="1"/><path d="M14.5 334.3 h-5" stroke="#111" stroke-width="0.8"/>
<path d="M23 327 L31 323.5 L38.5 327 L38.5 335.5 L31 339.5 L23 335.5Z" fill="#909090" stroke="#222" stroke-width="0.8"/><path d="M23 327 L31 323.5 L38.5 327 L31 331Z" fill="#d0d0d0" stroke="#222" stroke-width="0.6"/><path d="M31 331 L38.5 327 L38.5 335.5 L31 339.5Z" fill="#505050"/><circle cx="23" cy="327" r="1.3" fill="#fff" stroke="#222" stroke-width="0.6"/><circle cx="31" cy="339" r="1.3" fill="#fff" stroke="#222" stroke-width="0.6"/><circle cx="38" cy="335" r="1.3" fill="#fff" stroke="#222" stroke-width="0.6"/>
<!-- row11 -->
<circle cx="10" cy="349" r="4.3" fill="#fafafa" stroke="#222" stroke-width="0.9"/><path d="M6.8 352.2 L3.3 356" stroke="#222" stroke-width="1.6"/><rect x="15.5" y="354.5" width="2.8" height="2.8" fill="#fff" stroke="#222" stroke-width="0.7"/><path d="M13 352 l2.5 2.5" stroke="#222" stroke-width="0.6"/>
<rect x="26.5" y="344" width="11" height="10" fill="none" stroke="#333" stroke-width="0.9" stroke-dasharray="1.4 1"/><circle cx="29" cy="351" r="4" fill="#fafafa" stroke="#222" stroke-width="0.9"/><path d="M26 354 L23 357" stroke="#222" stroke-width="1.6"/>
<!-- row12 -->
<circle cx="12.5" cy="370.5" r="5.2" fill="#fafafa" stroke="#222" stroke-width="0.9"/><circle cx="11.2" cy="372" r="1.9" fill="#ffe020"/><circle cx="13.8" cy="369" r="1.9" fill="#ffe020"/><path d="M8.6 374.4 L4.5 378" stroke="#222" stroke-width="1.6"/><circle cx="30.2" cy="370.3" r="6.3" fill="#fafafa" stroke="#333" stroke-width="0.8"/><path d="M30.2 363 v3 M30.2 374.5 v3.3 M22.8 370.3 h3 M34.5 370.3 h3.4" stroke="#333" stroke-width="0.8"/><circle cx="30.2" cy="370.3" r="0.7" fill="#888"/>
<!-- row13 -->
<circle cx="10.7" cy="391.2" r="6.8" fill="#fafafa" stroke="#333" stroke-width="0.8"/><path d="M10.7 383.5 v3 M10.7 395.5 v3.5 M3 391.2 h3 M15 391.2 h3.5" stroke="#333" stroke-width="0.8"/><circle cx="9.5" cy="392.5" r="2" fill="#ffe020" stroke="#998800" stroke-width="0.4"/><circle cx="12" cy="389.8" r="2" fill="#ffe020" stroke="#998800" stroke-width="0.4"/>
<circle cx="31.5" cy="392" r="4.3" fill="#fafafa" stroke="#222" stroke-width="0.9"/><path d="M28.3 395.2 L24.5 398.5" stroke="#222" stroke-width="1.6"/><path d="M24 389 q2 -5 8 -4.5 q3 0.5 4 2.5" fill="none" stroke="#222" stroke-width="1.2"/><path d="M23.5 386 l0.5 4 l3 -2z" fill="#222"/>
<path d="M36 399 L40 395 L40 399Z" fill="#666"/>
</g>
</svg>
<div class="a" style="left:2.4px;top:707.5px;width:2px;height:16px;background:#d8dde8;"></div><svg width="1380" height="740"><rect x="7.1" y="710.5" width="8.5" height="8" fill="#ebebeb" stroke="#b8b8b8" stroke-width="1" opacity="1"/><path d="M8.6 714.3 l2 2.3 l4 -5" fill="none" stroke="#4a4a4a" stroke-width="1.3"/><rect x="37.4" y="710.5" width="8.5" height="8" fill="#ebebeb" stroke="#b8b8b8" stroke-width="1" opacity="1"/><path d="M38.9 714.3 l2 2.3 l4 -5" fill="none" stroke="#4a4a4a" stroke-width="1.3"/><rect x="72.1" y="710.5" width="8.5" height="8" fill="#ebebeb" stroke="#b8b8b8" stroke-width="1" opacity="1"/><path d="M73.6 714.3 l2 2.3 l4 -5" fill="none" stroke="#4a4a4a" stroke-width="1.3"/><rect x="108.3" y="710.5" width="8.5" height="8" fill="#ebebeb" stroke="#b8b8b8" stroke-width="1" opacity="1"/><path d="M109.8 714.3 l2 2.3 l4 -5" fill="none" stroke="#4a4a4a" stroke-width="1.3"/><rect x="139.5" y="710.5" width="8.5" height="8" fill="#ebebeb" stroke="#b8b8b8" stroke-width="1" opacity="1"/><path d="M141.0 714.3 l2 2.3 l4 -5" fill="none" stroke="#4a4a4a" stroke-width="1.3"/><rect x="170.9" y="710.5" width="8.5" height="8" fill="#ebebeb" stroke="#b8b8b8" stroke-width="1" opacity="1"/><path d="M172.4 714.3 l2 2.3 l4 -5" fill="none" stroke="#4a4a4a" stroke-width="1.3"/><rect x="197.0" y="710.5" width="8.5" height="8" fill="#ebebeb" stroke="#b8b8b8" stroke-width="1" opacity="1"/><path d="M198.5 714.3 l2 2.3 l4 -5" fill="none" stroke="#4a4a4a" stroke-width="1.3"/><rect x="230.5" y="710.5" width="8.5" height="8" fill="#ebebeb" stroke="#b8b8b8" stroke-width="1" opacity="1"/><path d="M232.0 714.3 l2 2.3 l4 -5" fill="none" stroke="#4a4a4a" stroke-width="1.3"/><rect x="260.8" y="710.5" width="8.5" height="8" fill="#ebebeb" stroke="#b8b8b8" stroke-width="1" opacity="1"/><rect x="297.9" y="710.5" width="8.5" height="8" fill="#ebebeb" stroke="#b8b8b8" stroke-width="1" opacity="1"/><rect x="331.8" y="710.5" width="8.5" height="8" fill="#ebebeb" stroke="#b8b8b8" stroke-width="1" opacity="1"/><path d="M333.3 714.3 l2 2.3 l4 -5" fill="none" stroke="#4a4a4a" stroke-width="1.3"/><rect x="371.8" y="710.5" width="8.5" height="8" fill="#ebebeb" stroke="#b8b8b8" stroke-width="1" opacity="0.35"/><rect x="420.2" y="710.3" width="8" height="8" fill="#cfe0f8" stroke="#6a9ae8" stroke-width="1"/><rect x="421.7" y="711.8" width="5" height="5" fill="#6a6e78"/></svg><div class="t" style="left:18.00px;top:711.00px;font-size:8.6px;line-height:8.6px;font-weight:normal;color:#454545;letter-spacing:-0.754px;">End</div><div class="t" style="left:48.70px;top:711.00px;font-size:8.6px;line-height:8.6px;font-weight:normal;color:#454545;letter-spacing:-0.454px;">Near</div><div class="t" style="left:82.60px;top:711.00px;font-size:8.6px;line-height:8.6px;font-weight:normal;color:#454545;letter-spacing:-0.052px;">Point</div><div class="t" style="left:118.80px;top:711.00px;font-size:8.6px;line-height:8.6px;font-weight:normal;color:#454545;letter-spacing:0.177px;">Mid</div><div class="t" style="left:150.00px;top:711.00px;font-size:8.6px;line-height:8.6px;font-weight:normal;color:#454545;letter-spacing:-0.740px;">Cen</div><div class="t" style="left:181.40px;top:711.00px;font-size:8.6px;line-height:8.6px;font-weight:normal;color:#454545;letter-spacing:0.177px;">Int</div><div class="t" style="left:207.80px;top:711.00px;font-size:8.6px;line-height:8.6px;font-weight:normal;color:#454545;letter-spacing:-0.549px;">Perp</div><div class="t" style="left:241.70px;top:711.00px;font-size:8.6px;line-height:8.6px;font-weight:normal;color:#454545;letter-spacing:-0.373px;">Tan</div><div class="t" style="left:271.80px;top:711.00px;font-size:8.6px;line-height:8.6px;font-weight:normal;color:#454545;letter-spacing:-0.342px;">Quad</div><div class="t" style="left:308.70px;top:711.00px;font-size:8.6px;line-height:8.6px;font-weight:normal;color:#454545;letter-spacing:-0.124px;">Knot</div><div class="t" style="left:343.00px;top:711.00px;font-size:8.6px;line-height:8.6px;font-weight:normal;color:#454545;letter-spacing:-0.336px;">Vertex</div><div class="t" style="left:381.70px;top:711.00px;font-size:8.6px;line-height:8.6px;font-weight:normal;color:#9a9a9a;letter-spacing:-0.041px;">Project</div><div class="t" style="left:430.80px;top:711.00px;font-size:8.6px;line-height:8.6px;font-weight:normal;color:#222;letter-spacing:-0.347px;">Disable</div><div class="a" style="left:0px;top:725px;width:1366px;height:1px;background:#cdd3e3;"></div><div class="a" style="left:0px;top:739px;width:1366px;height:1px;background:#7a7a7a;"></div><div class="a" style="left:35.4px;top:726px;width:1px;height:13px;background:#cdd3e3;"></div><div class="a" style="left:97.4px;top:726px;width:1px;height:13px;background:#cdd3e3;"></div><div class="a" style="left:160.3px;top:726px;width:1px;height:13px;background:#cdd3e3;"></div><div class="a" style="left:222.6px;top:726px;width:1px;height:13px;background:#cdd3e3;"></div><div class="a" style="left:285.2px;top:726px;width:1px;height:13px;background:#cdd3e3;"></div><div class="a" style="left:404.7px;top:726px;width:1px;height:13px;background:#cdd3e3;"></div><div class="a" style="left:482.6px;top:726px;width:1px;height:13px;background:#cdd3e3;"></div><div class="a" style="left:516.5px;top:726px;width:1px;height:13px;background:#cdd3e3;"></div><div class="a" style="left:550.4px;top:726px;width:1px;height:13px;background:#cdd3e3;"></div><div class="a" style="left:603.5px;top:726px;width:1px;height:13px;background:#cdd3e3;"></div><div class="a" style="left:645.6px;top:726px;width:1px;height:13px;background:#cdd3e3;"></div><div class="a" style="left:710.4px;top:726px;width:1px;height:13px;background:#cdd3e3;"></div><div class="a" style="left:739.5px;top:726px;width:1px;height:13px;background:#cdd3e3;"></div><div class="a" style="left:1360.5px;top:726px;width:1px;height:13px;background:#cdd3e3;"></div><div class="a" style="left:405.2px;top:726px;width:46.3px;height:13px;background:#d2dcf0;"></div><div class="a" style="left:483.4px;top:726px;width:33px;height:13px;background:#d2dcf0;"></div><div class="a" style="left:288.2px;top:728.7px;width:9.5px;height:9.2px;background:#000;"></div><div class="t" style="left:4.40px;top:729.10px;font-size:8.6px;line-height:8.6px;font-weight:normal;color:#222;letter-spacing:-0.402px;">CPlane</div><div class="t" style="left:51.80px;top:729.10px;font-size:8.6px;line-height:8.6px;font-weight:normal;color:#222;letter-spacing:-0.554px;">x 45.908</div><div class="t" style="left:114.80px;top:729.10px;font-size:8.6px;line-height:8.6px;font-weight:normal;color:#222;letter-spacing:-0.341px;">y -9.832</div><div class="t" style="left:179.00px;top:729.10px;font-size:8.6px;line-height:8.6px;font-weight:normal;color:#222;letter-spacing:-0.485px;">z 0.000</div><div class="t" style="left:242.60px;top:729.10px;font-size:8.6px;line-height:8.6px;font-weight:normal;color:#222;letter-spacing:-0.265px;">Inches</div><div class="t" style="left:299.70px;top:729.10px;font-size:8.6px;line-height:8.6px;font-weight:normal;color:#222;letter-spacing:-0.451px;">Layer 12</div><div class="t" style="left:409.00px;top:729.10px;font-size:8.6px;line-height:8.6px;font-weight:bold;color:#222;letter-spacing:-0.326px;">Grid Snap</div><div class="t" style="left:456.50px;top:729.10px;font-size:8.6px;line-height:8.6px;font-weight:normal;color:#222;letter-spacing:0.075px;">Ortho</div><div class="t" style="left:488.30px;top:729.10px;font-size:8.6px;line-height:8.6px;font-weight:bold;color:#222;letter-spacing:-0.575px;">Planar</div><div class="t" style="left:522.30px;top:729.10px;font-size:8.6px;line-height:8.6px;font-weight:normal;color:#222;letter-spacing:-0.407px;">Osnap</div><div class="t" style="left:556.20px;top:729.10px;font-size:8.6px;line-height:8.6px;font-weight:normal;color:#222;letter-spacing:-0.196px;">SmartTrack</div><div class="t" style="left:609.00px;top:729.10px;font-size:8.6px;line-height:8.6px;font-weight:normal;color:#222;letter-spacing:-0.023px;">Gumball</div><div class="t" style="left:650.80px;top:729.10px;font-size:8.6px;line-height:8.6px;font-weight:normal;color:#222;letter-spacing:-0.130px;">Record History</div><div class="t" style="left:716.50px;top:729.10px;font-size:8.6px;line-height:8.6px;font-weight:normal;color:#222;letter-spacing:-0.158px;">Filter</div><div class="t" style="left:740.50px;top:729.10px;font-size:8.6px;line-height:8.6px;font-weight:normal;color:#222;letter-spacing:-0.195px;">Memory use: 1641 MB</div><svg width="1380" height="740"><path d="M72.4 661.5 V642" stroke="#a8b4d0" stroke-width="1.2"/><path d="M72.4 661.5 L61 656" stroke="#d0b090" stroke-width="1"/><path d="M72.4 661.5 L55 666" stroke="#a0d090" stroke-width="1"/><path d="M75 637 h3.5 l-3.5 4.5 h3.5" fill="none" stroke="#7080b0" stroke-width="1"/><path d="M63.5 652.5 l3.5 3.5 M67 652.5 l-3.5 3.5" stroke="#c8a080" stroke-width="1"/><path d="M57 660 l1.5 2 l1.5 -2 M58.5 662 v3" fill="none" stroke="#90c880" stroke-width="1"/></svg><svg width="1380" height="740"><path d="M1356.5 82 l2.5 -2.5 l2.5 2.5" fill="none" stroke="#444" stroke-width="1.1"/><rect x="1354" y="94" width="10" height="12" fill="#cdcdcd"/><path d="M1356.5 111 l2.5 2.5 l2.5 -2.5" fill="none" stroke="#444" stroke-width="1.1"/><rect x="1354.5" y="119.5" width="9" height="11" fill="#f0f0f0" stroke="#c0c0c0" stroke-width="0.6"/><path d="M1356.5 123.5 l2.5 -2.5 l2.5 2.5z M1356.5 126 l2.5 2.5 l2.5 -2.5z" fill="#222"/></svg><svg width="1380" height="740"><path d="M529 266.5 L782 233.5 L861 250 Q894 261 895.5 298 L887.6 485 L885.4 514.6 Q883 531 873 537 L862 542.5 L836 552 L801 561.5 L775 570 L746 580 L724 587.5 L702 597 L666 608 L649 613 L624 620.5 Q590 612 552 572 Q531 549 528 523 L516 284 Q516 268 529 266.5Z" fill="#d9dbe1"/><path d="M530 267.5 L782 235 L861 251.5 Q893 262 894.5 298 L886.6 485 L884.4 514.6 Q882 530 872 536 L861 541 L835 550.5 L812 555 L800 558.5 L774 567 L745 577.5 L735 581 L723 584 L701 594 L665 605 L648 609.5 L622 618 Q590 610 553 571 Q532 548 529 523 L517.8 285 Q518 269 530 267.5Z" fill="#ffff00"/><path d="M530.5 328.4l-0.2 1.7M535.8 384.4l2.7 1.4M520.4 402.3l1.6 0.8M532.7 504.4l1.8 1.2M540.1 535.1l0.0 2.7M546.7 364.7l1.5 1.1M528.7 501.1l2.4 2.2M540.4 386.0l0.1 1.7M522.2 342.2l-0.6 2.7M529.7 441.1l0.6 2.3M544.4 470.5l2.1 2.4M537.2 516.4l-0.7 2.3M532.2 485.9l2.3 1.8M521.9 462.2l-1.2 3.0M548.4 370.0l-0.8 3.2M539.7 406.8l-2.2 3.7M533.6 461.9l3.2 1.7M541.3 547.2l-1.1 2.1M531.0 463.3l2.7 1.1M523.7 319.6l3.4 1.7M523.3 352.5l1.6 3.8M522.4 404.7l0.3 4.1M545.4 513.5l1.6 2.2M532.2 519.2l-1.4 1.4M524.7 349.2l2.0 2.2M537.6 357.8l2.6 1.0M533.1 436.0l-2.5 2.6M536.7 449.8l-0.3 1.6M549.9 491.2l-2.2 3.2M531.1 392.8l2.9 1.8M521.3 306.8l1.4 1.4M530.0 303.3l1.8 0.7M521.4 383.7l3.8 1.6M538.8 327.6l1.6 2.0M532.8 320.0l-2.4 3.8M534.1 415.3l1.6 0.9M531.5 358.0l-1.0 1.7M520.6 536.3l0.2 1.9M537.1 294.8l0.5 4.4M546.8 470.0l1.6 2.0M525.1 488.8l0.4 3.8M531.6 346.0l-2.0 4.0M548.2 497.9l-1.8 3.3M526.9 423.9l0.7 1.4M519.8 361.3l2.2 2.8M550.9 546.0l-1.8 1.8M526.3 348.3l1.5 1.5M540.7 522.8l-1.5 2.5M539.4 497.0l3.0 1.7M549.6 492.0l-1.0 2.8M524.7 493.5l2.0 3.4M533.1 535.2l-0.6 1.9M525.3 327.8l-2.4 3.1M526.0 503.7l-2.6 2.3M530.6 432.2l1.3 0.9M550.8 456.8l0.5 4.3M534.4 515.7l-1.0 1.9M527.0 364.9l2.1 2.5M526.6 397.7l3.4 2.5M531.3 407.0l-0.0 4.2M533.2 527.1l0.5 3.1M536.4 293.9l0.6 2.0M519.0 496.8l2.2 1.9M542.4 433.4l1.6 2.6M536.4 493.1l2.7 1.7M528.5 360.6l-1.2 2.8M538.9 486.5l-1.8 2.2M539.3 419.7l0.5 3.5M534.0 426.5l0.9 4.2M543.2 517.1l-1.6 1.7M538.4 534.4l-1.0 1.6M522.9 404.4l1.9 1.1M523.2 462.1l-1.7 3.8M525.1 475.2l-0.3 1.9M546.7 540.0l3.0 3.2M534.2 415.4l-3.0 2.6M525.0 400.9l0.4 2.5M526.5 372.1l-0.4 1.5M536.6 404.0l2.3 0.9M538.0 422.2l3.9 2.1M544.3 542.0l1.9 1.2M520.7 491.8l1.2 1.5M534.1 526.0l-1.1 2.0M524.7 527.2l0.1 3.6M523.2 303.6l-0.6 2.7M522.5 532.0l-0.4 3.9M520.9 511.7l3.6 1.9M534.4 376.0l0.3 4.3M528.4 322.5l0.3 2.2M522.6 331.5l1.9 0.9M530.4 368.2l-0.9 2.2M535.6 335.6l0.7 1.4M528.5 292.5l-1.0 3.0M526.7 412.8l-1.2 1.3M545.8 400.4l0.7 3.9M533.1 419.6l-1.0 4.3M531.4 504.7l-0.9 3.3M532.1 379.9l1.7 0.8M521.6 481.9l1.3 1.5M523.7 507.3l-2.0 2.9M528.2 351.8l1.6 2.4M523.7 404.2l2.7 3.4M527.1 540.0l1.4 2.2M519.7 387.8l0.7 2.9M525.4 420.8l2.1 0.8M522.2 393.5l1.4 0.7M529.7 349.0l-0.0 3.1M544.6 459.0l-1.1 4.0M533.2 374.1l-1.5 1.3M541.4 456.4l3.6 1.7M549.2 451.2l-1.2 3.7M524.1 424.2l0.7 4.0M545.8 502.8l-0.0 4.2M541.3 469.7l1.1 1.2M522.6 382.7l3.4 2.2M538.0 451.5l-0.3 3.5M536.5 289.2l-1.6 3.4M536.2 428.3l-0.3 1.7M542.6 355.0l2.0 1.1M544.1 341.3l-1.4 4.2M535.4 387.7l0.8 3.5M544.7 449.6l-0.2 1.7M525.1 354.9l-0.8 2.3M537.1 292.7l2.0 1.1M541.7 468.8l-0.5 2.3M536.3 409.9l0.5 1.8M550.2 340.3l-3.2 2.9M521.6 407.4l-2.1 3.9M532.9 358.3l3.1 3.1M525.5 440.3l2.5 1.8M547.3 420.8l-2.1 2.9M527.2 522.6l0.3 1.5M519.8 416.7l0.7 2.3M523.4 377.7l2.1 3.4M520.5 484.4l-0.9 1.6M550.4 474.5l-1.5 1.9M533.2 391.1l-2.5 2.1M531.0 400.6l1.0 1.3M522.0 505.3l2.5 3.5M527.8 358.1l0.3 2.0M533.1 537.0l-2.3 3.2M541.3 526.3l-2.1 2.3M543.5 301.5l-0.9 2.7M543.6 456.9l1.0 1.3M534.1 377.8l2.1 3.1M540.9 366.9l0.1 2.7M523.9 330.5l3.0 3.0M537.3 345.5l-2.8 3.5M533.8 325.7l1.3 1.2M530.2 312.8l1.5 1.7M538.7 519.4l-0.9 2.6M532.7 425.1l1.1 2.3M522.7 361.5l-1.4 1.3M536.7 452.8l-1.2 1.8M528.1 353.3l1.1 2.6M551.0 510.0l-0.9 1.3M521.9 473.3l-1.8 2.3M538.0 288.1l1.7 3.9M547.2 511.6l-1.6 1.5M523.3 328.4l0.5 3.5M550.4 475.8l-0.5 3.8M532.9 432.6l3.5 1.6M527.6 528.0l-0.3 2.4M524.3 353.7l-0.4 3.6M523.4 306.7l0.4 3.2M532.4 347.4l-0.1 1.5M530.9 408.6l-2.4 2.4M547.5 412.7l1.5 1.7M550.3 472.6l0.9 1.3M535.6 464.3l0.8 2.1M540.8 530.0l1.1 1.2M531.0 398.3l-0.4 2.0M545.3 481.1l0.3 2.1M544.9 348.6l2.6 2.7M529.2 536.5l0.4 2.0M527.5 396.3l-0.7 4.3M523.1 390.7l3.1 3.2M523.3 302.9l2.4 1.2M549.4 517.6l-1.4 4.3M526.2 532.6l-0.5 1.5M540.7 387.3l1.1 2.3M524.7 289.7l1.5 2.1M532.1 502.4l-1.3 2.5M520.7 411.2l1.8 3.9M526.7 384.1l-1.0 1.3M533.4 500.3l-0.6 1.5M521.9 305.4l-1.5 1.7M543.3 522.6l1.1 2.0M549.5 449.0l2.3 2.9M528.4 361.0l3.5 1.3M549.9 454.3l-1.1 1.1M529.0 412.0l-3.1 3.1M531.9 353.9l0.9 2.8M546.6 480.3l-1.8 3.3M538.8 374.1l1.4 2.2M543.7 309.2l2.7 2.6M526.5 306.2l2.9 1.3M531.7 543.1l-2.6 3.6M527.2 311.1l2.6 1.6M541.8 405.2l1.8 2.0M540.5 463.4l-1.4 3.8M541.9 320.5l-1.2 2.0M538.5 386.0l-0.7 2.0M526.3 352.5l3.3 2.6M537.6 372.8l1.7 4.1M537.0 348.6l-1.6 3.1M536.3 501.1l-2.2 3.6M520.4 365.8l1.7 1.2M550.6 385.6l-1.6 2.4M528.9 491.6l-1.3 1.3M538.2 450.2l1.8 1.9M523.5 341.8l2.1 2.5M539.7 342.4l2.3 0.9M541.1 337.2l1.1 1.8M544.6 432.1l1.6 0.8M532.8 432.2l-0.2 1.8M524.8 469.7l0.8 2.2M529.0 536.5l1.7 2.7M532.7 396.4l-2.5 3.7M532.0 340.3l-0.6 2.0M519.5 522.6l1.3 3.7M532.7 518.6l0.5 1.9M520.7 431.3l-0.5 4.2M522.2 450.4l1.3 2.7M524.4 361.5l0.6 4.2M524.5 415.6l-2.0 3.9M527.8 321.3l-3.0 3.2M536.3 302.9l-1.8 2.0M549.4 450.4l-1.0 1.7M544.4 345.9l1.5 3.8M545.6 336.6l1.9 1.9M535.7 389.1l1.8 1.3M541.8 522.6l2.9 1.3M544.7 299.1l-0.9 1.6M539.3 431.8l-0.2 2.4M532.9 439.8l1.1 3.3M532.8 403.3l3.1 1.3M536.4 349.4l-1.4 3.6M534.5 335.8l0.4 1.8M522.9 401.2l2.4 1.5M536.4 299.7l-0.2 1.7M543.3 491.4l0.2 1.6M536.8 387.6l-1.3 1.4M548.0 547.1l-1.2 3.8M525.8 543.1l0.8 4.3M544.1 531.4l2.3 1.2M544.9 330.4l-1.4 1.8M545.7 325.2l0.7 4.2M526.5 357.1l0.4 2.4M519.5 336.0l3.3 2.7M540.3 521.6l2.9 2.5M523.8 426.7l-0.3 2.6M547.9 432.3l0.0 4.1M523.5 546.8l-0.3 2.7M546.7 357.8l-2.4 2.1M531.2 487.8l0.6 1.9M544.3 301.6l-1.1 2.0M540.5 544.1l-0.0 3.5M529.1 290.1l1.8 0.8M539.4 400.3l0.6 4.1M524.3 348.3l-0.2 1.6M519.0 381.6l2.2 1.4M527.2 440.7l-0.0 2.1M538.2 412.2l3.5 2.5M526.3 327.9l2.9 1.8M547.5 492.3l0.9 2.1M520.3 456.4l0.1 2.5M541.9 404.0l-2.5 2.7M526.6 524.3l2.8 1.3M531.3 350.9l3.4 1.7M521.1 432.5l-1.3 1.4M526.1 446.4l0.5 3.4M545.4 334.4l1.3 2.0M522.3 519.6l-1.5 3.3M520.7 508.2l-1.0 2.7M543.1 407.0l1.2 1.3M526.5 298.5l1.9 3.3M542.5 508.7l-0.6 2.2M538.4 402.0l-1.3 2.8M529.3 456.2l-1.5 1.5M529.0 349.3l-1.4 4.1M544.6 374.0l-1.4 2.0M527.8 524.2l-0.4 3.6M540.8 542.6l0.9 3.9M541.8 511.2l1.1 3.5M537.1 368.8l2.4 2.4M521.9 526.3l1.3 1.0M523.0 530.7l0.9 1.7M521.3 299.2l-0.8 3.3M540.9 480.8l2.9 1.5M532.6 500.7l-2.0 3.7M523.5 514.0l-2.8 3.3M522.8 343.0l1.3 0.9M547.3 499.1l-0.4 4.0M539.4 364.2l1.5 1.0M543.5 342.1l1.5 2.4M519.6 355.3l2.1 2.9M532.9 372.4l-2.2 2.1M546.0 450.2l2.5 1.1M533.1 489.4l1.7 3.2M537.7 345.6l-1.0 1.5M545.2 333.9l2.0 0.7M543.0 543.7l2.8 1.0M534.6 496.2l2.2 2.0M529.8 504.6l2.7 3.4M529.4 344.4l-0.7 2.9M521.8 454.5l3.4 1.9M542.4 493.3l-0.2 2.6M533.4 391.9l-1.1 1.4M527.5 357.2l-1.9 2.4M531.2 518.8l1.9 2.1M537.6 484.6l-1.2 3.2M529.6 373.7l3.1 2.5M540.1 482.0l2.1 1.8M543.6 439.8l2.4 1.7M547.4 351.0l1.8 1.6M541.7 508.7l1.5 1.2M527.8 373.9l0.3 2.0M531.8 338.0l-2.7 2.5M522.1 539.5l2.2 1.4M551.9 495.3l-0.9 2.7M525.4 455.3l1.8 1.1M531.7 297.0l1.5 3.6M542.3 418.7l-0.3 2.9M523.9 445.2l1.4 3.5M549.0 399.9l0.1 3.7M534.1 347.4l-1.2 4.0M545.7 470.5l-1.9 3.0M539.6 406.6l1.8 2.9M523.9 397.4l-1.5 3.3M539.7 353.7l0.9 2.7M540.3 394.3l-0.8 4.2M526.4 458.9l-1.1 2.4M534.3 542.8l2.8 1.3M526.2 492.1l-2.1 2.2M523.1 437.6l0.3 3.6M537.1 454.9l-1.5 2.7M531.9 535.2l2.5 2.5M530.7 487.0l3.7 2.5M530.6 303.6l1.6 2.2M519.8 397.1l1.2 3.4M530.0 357.6l2.5 2.7M548.7 425.6l2.7 2.8M531.0 344.0l3.1 2.2M545.5 453.4l0.8 3.1M526.4 539.1l1.6 3.0M545.9 501.0l0.6 2.3M538.2 321.4l-1.3 2.2M546.7 358.5l1.0 2.1M531.9 337.7l3.4 1.3M528.2 352.5l1.6 2.4M533.9 454.4l-0.4 2.6M547.9 511.3l3.6 1.8M547.4 492.7l3.2 2.4M538.2 293.1l4.1 1.6M540.2 354.5l1.6 1.0M527.0 491.0l0.9 1.7M547.3 494.5l3.2 2.7M539.8 491.1l-0.7 4.1M543.9 506.9l2.6 2.5M536.4 480.9l1.2 4.0M537.1 358.1l1.3 1.4M535.5 304.3l0.5 1.9M535.5 417.5l0.4 4.1M519.8 507.1l0.8 3.1M540.7 507.3l1.2 2.5M538.9 454.7l3.1 1.3M540.7 530.3l2.2 3.8M536.8 415.4l-1.0 1.3M542.0 450.8l2.0 3.6M531.5 411.5l0.5 3.8M526.2 401.7l1.0 3.0M547.1 365.0l-1.3 2.4M535.8 358.5l0.7 4.4M540.3 494.8l1.2 2.1M529.8 440.6l-0.4 3.8M522.2 476.6l-1.9 2.5M520.6 367.7l1.9 0.7M549.8 446.3l-0.6 3.8M549.2 447.4l-0.2 3.4M542.5 444.0l-0.4 2.1M541.7 408.2l-0.7 1.7M526.6 297.7l-1.7 3.9M541.9 384.2l-1.9 3.4M537.2 355.9l1.5 2.3M530.5 399.8l-0.5 4.3M520.9 437.2l1.7 0.8M546.8 438.5l-1.8 2.2M520.5 388.5l-0.1 4.3M533.3 315.5l-0.3 2.1M523.2 293.4l3.3 1.2M522.1 540.2l3.5 2.1M524.4 293.6l-0.6 2.1M541.8 337.9l3.4 1.7M543.1 511.6l-0.5 1.7M539.6 472.3l1.1 4.2M528.3 540.0l-0.4 1.5M520.9 458.4l-0.8 1.5M528.4 478.3l3.1 2.6M534.9 304.1l1.4 2.9M532.5 464.8l3.1 2.4M531.8 456.3l-0.3 2.7M533.7 493.0l-2.6 2.8M536.2 365.0l3.9 2.0M541.7 503.7l1.7 2.9M551.3 504.9l-0.1 2.4M533.0 519.3l1.5 3.2M539.8 521.9l-1.1 2.1M519.5 356.9l1.1 3.1M544.3 519.9l3.6 1.7M545.9 514.3l0.1 2.3M547.7 497.8l-0.9 4.1M531.0 310.2l0.2 3.9M527.1 484.2l-1.5 1.6M539.2 465.2l0.5 2.1M528.8 484.0l-1.2 2.6M523.2 498.7l-0.8 2.0M539.5 522.0l-1.8 2.5M534.5 442.5l1.5 1.4M525.1 470.8l1.4 2.9" stroke="#ffffff" stroke-width="0.6" opacity="0.6" fill="none"/><path d="M582.8 401.7l0.9 -1.3M638.9 373.1l1.7 -2.9M618.6 327.2l2.5 -0.5M593.5 301.3l1.8 -4.1M626.2 395.0l2.2 -0.5M617.3 381.5l3.5 1.6M622.2 493.1l1.1 -1.1M563.7 332.8l0.8 -1.5M596.0 474.4l4.0 -1.8M630.1 308.4l2.6 -0.5M555.2 492.8l2.3 -2.2M604.5 491.1l2.7 -0.1M585.6 326.7l4.0 2.0M565.2 303.8l1.8 -1.8M630.0 480.2l1.6 0.4M617.5 440.7l4.4 -0.4M548.1 324.5l4.3 0.4M607.5 356.6l3.7 -0.7M554.3 362.1l1.3 -1.3M590.1 330.3l1.3 -1.4M608.3 297.6l2.1 0.1M547.0 486.8l2.9 -3.2M626.5 478.4l1.6 -2.4M552.6 485.0l3.3 0.8M586.5 364.3l2.9 0.6M604.1 324.9l1.1 -1.2M611.6 410.1l2.3 -3.4M569.6 380.4l1.3 -1.9M623.9 364.8l1.8 -2.4M574.1 482.0l2.3 -3.8M549.3 478.5l2.1 -0.1M589.6 354.4l1.5 -1.5M577.8 497.1l3.7 2.1M553.5 354.1l1.6 0.6M613.3 354.8l1.4 0.7M621.2 365.5l0.8 -1.2M623.2 404.0l1.7 -2.2M630.7 340.0l1.9 -0.4M561.1 452.9l2.1 0.0M551.1 313.2l2.9 -0.5M569.2 337.5l3.6 -0.6M621.6 415.1l1.1 -1.3M613.8 378.6l1.7 0.1M620.0 363.2l4.0 1.0M590.5 297.6l2.7 1.1M626.6 351.1l2.5 -3.1M578.5 329.4l2.8 -1.8M544.1 402.2l2.8 -1.3M554.5 441.1l4.0 0.8M573.9 441.8l3.2 -2.0M549.5 473.3l2.7 1.3M593.0 404.0l1.5 -0.4M636.3 341.6l1.1 -1.4M568.4 463.3l0.7 -1.6M610.8 336.5l1.2 -3.1M598.9 402.2l1.8 0.0M627.2 442.9l0.8 -1.7M591.2 398.3l1.4 -1.2M581.5 323.5l4.0 -0.8M558.0 412.4l2.0 0.2M622.3 487.9l2.4 -1.4M622.9 403.8l3.7 -2.2M617.9 365.3l1.7 -1.8M584.3 495.8l4.2 0.8M621.8 470.1l1.3 -2.8M635.0 487.5l2.0 -2.0M604.3 370.0l1.6 -0.5M585.8 399.4l0.7 -1.8M635.6 453.5l3.1 1.4M621.1 476.0l1.5 0.5M604.8 349.5l2.3 -0.1M595.4 484.7l2.2 -0.3M593.4 383.4l2.1 1.0M573.1 429.1l1.7 -2.8M634.8 401.3l2.1 -2.0M595.2 326.2l1.0 -1.6M572.1 379.1l1.7 -1.5M551.7 406.6l3.2 0.8M598.0 429.7l2.3 -2.8M587.3 407.6l2.9 -0.4M573.5 345.8l2.0 -2.3M580.9 416.3l0.9 -2.4M625.4 344.3l2.9 -0.7M570.6 498.7l2.9 -2.5M558.7 308.3l2.7 0.8M549.2 375.3l3.3 -1.6M553.7 340.3l3.3 1.6M558.2 365.1l2.9 -2.0M602.1 468.9l3.0 0.6M613.7 447.2l2.9 0.3M618.7 439.9l1.8 0.7M626.1 295.7l3.2 0.4M591.0 492.7l2.7 -0.6M618.1 474.1l2.6 -0.4M586.8 388.8l2.4 0.1M581.1 409.5l2.1 -1.3M618.4 469.6l2.7 -1.0M561.6 358.7l1.8 -2.7M599.1 312.6l2.3 0.9M624.2 466.4l1.9 0.9M585.2 482.4l0.6 -1.5M596.9 396.2l3.5 1.4M594.7 500.1l2.9 -1.0M608.7 375.8l2.7 -1.8M576.8 489.4l3.1 -0.1M553.0 372.5l2.8 -1.6M598.2 474.7l2.7 1.3M585.7 422.4l2.2 1.3M594.6 463.2l1.5 -2.0M637.1 464.6l1.7 -0.6M627.8 436.0l4.4 0.9M628.7 382.2l1.4 -1.9M593.0 399.3l1.3 -1.6M603.0 419.9l3.7 -2.5M603.8 304.6l3.4 -1.9M573.7 437.7l0.8 -2.3M624.0 415.2l2.1 -0.1M591.0 409.6l2.5 -2.4M594.2 499.7l2.7 -0.6M555.6 327.0l1.8 0.2M552.6 330.6l3.8 -1.2M602.9 461.0l0.7 -1.4M616.9 361.1l2.6 0.1M560.0 351.5l2.1 -3.6M599.1 367.1l2.4 -1.1M548.1 478.0l4.3 -0.9M586.2 422.7l1.2 -1.2M631.8 471.5l3.3 -2.6M620.4 357.6l4.3 -0.7M591.1 490.6l1.9 -1.9M611.7 341.7l3.2 -2.6M590.3 458.2l1.4 -1.4M578.0 332.7l2.1 1.1M597.1 318.9l2.5 -0.8M582.2 310.1l2.1 -3.4M577.6 346.1l1.5 -1.8M566.3 302.2l2.5 -0.2M559.2 440.7l1.1 -2.0M622.5 322.1l3.6 -1.7M620.0 328.7l3.0 -2.1M579.4 493.1l2.8 -3.3M592.1 342.0l1.7 -0.8M610.6 347.9l3.1 1.1M578.9 345.7l2.1 -0.3M626.4 320.7l3.0 -1.0M569.2 454.1l3.0 -1.8M598.2 359.2l1.5 -0.9M560.4 470.5l2.8 -2.1M554.1 411.0l2.5 -1.7M572.4 309.2l1.7 -1.4M556.0 442.8l2.0 -1.8M629.4 453.2l3.9 1.3M556.9 353.3l1.4 -3.3M606.5 367.9l3.0 -1.7M610.2 345.6l2.5 0.6M603.6 334.0l2.2 -3.6M614.4 441.8l0.7 -1.5M559.4 336.5l2.0 -1.7M547.7 358.8l2.0 -0.2M623.6 411.9l2.3 0.1M585.7 435.7l1.2 -0.9M623.6 454.7l1.2 -1.1M625.7 420.5l0.9 -2.0M554.2 458.8l2.8 -3.2M614.9 312.7l2.7 -0.0M615.4 465.5l1.3 -1.2M633.3 381.2l3.3 1.4M613.8 465.3l2.8 -0.4M548.8 438.8l2.7 -1.4M632.4 321.1l1.6 0.2M610.6 461.3l2.3 -2.2M636.0 426.0l2.2 -0.6M549.7 368.9l1.8 -1.0M572.7 323.0l3.5 0.0M566.3 345.0l2.7 -0.9M632.3 368.4l3.2 -2.7M556.9 411.6l3.2 -2.4M596.0 452.3l2.1 -2.8M599.9 389.3l4.0 0.5M555.0 354.9l1.8 -1.2M549.6 354.0l2.3 -2.8M586.4 319.0l2.3 -1.8M579.1 330.1l0.7 -1.4M638.4 450.4l1.7 -3.2M637.4 411.8l1.5 -2.5M585.5 334.1l1.5 -0.4M630.2 427.4l4.3 -0.5M606.3 347.2l1.3 -1.4M546.5 453.5l2.3 0.6M560.6 425.3l4.1 1.1M559.2 455.4l3.6 0.8M574.8 332.6l2.4 0.5M578.3 409.1l3.3 -2.2M566.1 303.8l3.3 -0.8M620.8 438.9l4.1 1.5M591.3 398.4l1.4 -1.9M599.2 311.5l2.0 -0.0M586.7 494.5l0.8 -1.4M586.0 334.1l1.5 0.1M623.5 470.1l2.7 0.4M570.6 431.1l2.6 -0.9M575.2 385.0l4.0 -0.2M629.8 329.6l2.2 -1.8M598.0 367.0l1.1 -1.4M573.9 388.4l3.8 1.9M625.7 494.0l3.0 1.5M620.4 307.4l3.3 -0.1M571.9 411.5l2.7 1.3M604.8 357.6l3.4 -2.4M546.2 333.8l2.8 -0.1M551.7 431.3l2.7 -1.8M583.2 404.0l2.6 -0.6M554.4 331.5l3.0 1.0M555.0 472.4l1.3 -1.3M593.9 347.1l3.0 -1.1M565.7 413.7l1.6 -2.6M600.2 311.9l1.5 -0.8M585.0 472.5l3.5 -0.9M615.3 317.6l3.2 1.8M553.8 465.7l1.7 -1.0M635.3 410.3l1.9 0.2M617.8 307.7l1.8 -1.9M545.6 417.7l1.6 -1.8M610.6 381.8l3.2 1.1M625.9 409.6l3.8 1.5M559.4 448.9l3.1 -2.2M609.0 465.4l1.4 -2.2M614.2 489.3l1.6 0.1M600.5 315.9l3.8 -1.0M554.6 484.7l2.3 -0.1M561.8 386.2l3.2 0.8M554.8 301.0l2.0 -3.3M561.3 409.8l2.7 -2.3M579.7 324.1l3.0 0.9M609.8 460.4l1.4 0.6M575.6 326.6l3.9 -1.4M619.8 303.8l2.4 -3.1M608.6 375.9l1.8 -0.8M623.7 375.2l3.2 1.0M550.8 364.1l2.8 -3.1M600.2 305.0l1.6 -2.1M588.3 414.0l2.2 -1.3M544.9 414.2l1.3 -0.9M588.2 498.1l0.8 -1.8M607.6 351.9l2.2 -2.0M567.8 412.3l4.2 -1.3M637.4 302.5l3.7 -0.9M626.2 453.9l3.4 -0.4M577.4 352.4l4.1 0.7M632.7 435.9l2.9 -2.4M614.0 399.5l2.5 -0.3M596.8 379.4l1.1 -2.3M574.5 498.1l2.4 -1.0M567.3 343.7l1.6 -1.1M544.4 474.1l2.6 -1.2M598.5 357.7l1.0 -1.4M572.1 358.2l3.2 0.1M632.6 364.2l3.0 1.2M550.4 332.1l4.4 -0.9M577.1 454.7l3.7 -1.9M550.3 393.9l2.2 0.8M568.8 300.7l1.4 -1.9M611.0 340.3l1.8 -1.1M601.2 472.2l2.1 -0.2M613.9 492.6l1.7 -0.3M621.1 475.0l1.5 -1.1M561.2 404.6l3.3 1.0M631.2 339.6l3.0 -2.3M605.4 378.1l2.5 -0.1M549.8 381.5l1.4 -3.1M575.7 396.5l2.2 -0.4M587.5 297.2l2.9 1.2M637.0 306.8l3.6 -0.5M575.7 314.9l1.1 -1.6M616.5 313.1l2.7 0.5M594.5 416.1l3.4 -0.9M601.0 362.7l2.3 0.2M611.4 451.3l2.4 0.3M617.3 495.9l2.1 -1.0M594.3 488.5l0.8 -1.3M588.9 429.2l2.6 0.3M638.1 341.7l1.8 0.2M547.0 323.8l1.3 -2.7M596.6 331.7l2.4 1.1M557.1 331.2l4.3 0.3M559.3 300.8l2.2 0.3M637.1 397.4l2.5 -0.3M619.4 390.6l3.3 -2.6M554.5 446.9l1.5 -3.1M582.5 473.6l1.4 -2.9M582.4 482.7l3.1 1.4M565.3 347.6l2.0 -1.9M565.3 336.5l3.4 0.4M572.3 500.0l2.1 -2.4M558.8 471.6l2.2 0.7M615.5 464.5l1.9 -1.7M590.1 479.1l2.1 -2.9M599.7 388.3l4.1 -0.9M563.3 477.2l3.2 -2.1M624.9 331.7l4.3 1.3" stroke="#ffffff" stroke-width="0.6" opacity="0.5" fill="none"/><path d="M582.6 504.7l1.4 -4.2M569.0 578.2l0.6 -1.9M618.6 511.2l2.6 -3.4M622.3 592.6l1.6 -0.0M576.6 583.5l1.5 -0.7M602.3 525.0l1.3 -1.3M584.6 593.6l1.0 -2.8M567.2 546.6l1.5 -3.2M568.3 578.1l1.4 -1.2M587.3 552.3l2.5 -0.3M573.6 601.9l3.6 -0.6M580.5 519.3l0.9 -1.5M558.0 554.6l2.1 -2.3M587.9 501.8l3.1 -1.5M604.7 558.6l4.0 -1.9M637.2 576.3l1.6 -1.8M593.9 603.2l1.7 -2.0M593.2 515.0l1.5 -0.0M611.9 598.7l1.7 -2.9M590.4 526.1l0.8 -1.7M634.3 582.4l1.6 -0.2M619.6 534.8l2.8 -1.5M584.7 603.9l0.7 -3.7M634.2 554.8l3.8 -2.4M576.0 566.6l2.5 -0.9M621.3 542.3l2.6 -2.1M618.0 534.6l2.7 -1.5M575.1 566.1l2.2 -3.6M598.8 576.7l2.3 -1.8M574.5 515.1l3.1 -0.3M603.7 555.7l2.1 -0.6M570.1 587.5l2.5 -2.3M632.8 594.0l1.6 -0.3M590.3 587.6l1.8 -0.5M569.2 527.6l0.8 -2.4M630.7 555.4l1.3 -1.2M591.3 605.3l2.6 -1.2M599.5 584.1l1.8 -0.6M618.7 539.2l1.7 -1.4M589.7 536.3l1.0 -1.2M573.8 560.9l0.5 -2.0M622.6 529.7l1.3 -1.8M632.5 510.6l3.6 -2.0M572.6 544.9l3.2 -1.0M589.4 505.5l1.9 -1.8M621.5 532.3l2.3 -2.5M631.0 538.2l2.1 -2.4M641.0 520.2l3.6 -0.1M589.9 570.6l1.0 -1.4M625.6 540.8l2.4 -1.8M640.3 581.1l0.7 -3.2M597.6 548.8l2.7 -0.6M598.9 594.5l2.1 -2.1M602.0 587.4l3.3 -1.7M591.7 504.9l2.9 -1.4M627.7 581.9l0.7 -2.0M563.2 509.8l3.0 -1.1M558.9 572.1l2.7 -1.2M559.1 573.7l2.2 -2.4M648.9 585.9l1.9 -0.3M586.4 556.6l0.8 -4.4M580.4 528.5l1.3 -1.9M635.5 559.2l2.1 -1.7M557.9 532.3l3.8 -0.7M636.0 527.7l0.7 -1.5M604.9 540.3l2.2 -2.0M609.4 538.7l2.0 -0.6M642.0 559.6l0.6 -2.4M604.6 543.6l2.0 -1.4M580.0 585.1l2.0 -3.0M629.7 563.7l3.1 -3.0M596.9 593.6l0.7 -2.7M614.9 505.3l1.7 -0.3M610.1 519.1l3.2 -0.3M629.5 553.1l3.2 -1.6M582.1 522.4l1.9 -0.4M641.9 522.6l0.6 -1.7M628.3 601.1l2.4 -2.5M578.6 595.5l1.8 -0.8M559.9 575.0l0.9 -3.9M581.9 525.1l2.0 -1.4M607.0 516.3l2.5 -0.3M632.8 516.6l4.3 -1.2M591.1 504.8l2.2 -2.6M575.8 558.7l0.9 -2.8M623.4 545.5l1.7 -0.8M631.5 513.1l4.5 -0.5M643.5 556.3l1.4 -2.1M625.4 552.2l1.8 -0.2M599.7 591.6l2.6 -1.7M562.3 516.4l2.2 -3.6M634.5 523.9l1.6 -0.2M610.6 603.3l2.6 -3.4M616.5 506.4l1.7 -2.3M577.7 579.7l1.6 -3.5M582.6 507.8l1.5 -1.0M606.2 583.5l2.4 -1.5M557.7 555.5l1.1 -3.3M566.7 561.7l1.6 -2.1M617.1 519.2l1.7 -4.0M585.1 588.7l2.9 -0.5M568.2 510.0l1.8 -0.3M601.6 557.6l1.0 -2.7M569.6 557.1l2.0 -1.7M573.4 543.2l0.8 -1.7M576.2 592.8l3.2 -2.7M599.9 584.1l2.9 -2.0M576.3 579.8l0.9 -2.1M557.0 542.0l1.9 -1.5M638.7 509.5l1.8 -1.2M610.8 582.7l1.6 -0.7M577.5 562.9l1.6 -0.0M612.5 573.0l2.4 -0.6M631.2 548.6l1.5 -0.2M643.7 543.9l1.2 -1.3M577.4 577.5l1.8 -0.8M587.2 515.7l0.9 -1.9M584.5 602.5l3.9 -0.0M598.6 552.9l4.0 -1.3M625.7 568.3l1.5 -3.0M634.8 584.3l1.1 -3.5M586.4 517.1l3.5 -0.2M623.7 514.7l4.2 -1.0M639.1 578.7l3.8 -0.9M609.2 546.2l3.7 -0.9M636.2 531.5l3.1 -0.2M642.9 512.2l3.9 -0.2M578.4 588.9l1.0 -1.8M596.9 526.2l3.2 -2.7M618.8 576.0l2.5 -2.9M628.4 571.9l4.0 -0.3M591.8 510.1l3.5 -1.9M585.4 562.9l3.8 -0.9M555.2 552.2l0.4 -1.8M631.0 544.7l2.4 -1.5M585.6 524.0l2.5 -3.2M613.5 531.8l0.7 -2.2M619.9 547.3l3.5 -1.8M566.0 573.6l0.9 -3.9M571.2 528.6l2.6 -0.2M574.5 594.5l3.6 -2.2M591.0 552.6l3.0 -0.2M647.9 520.1l1.9 -0.5M604.2 502.0l1.8 -4.0M597.5 586.1l1.3 -2.2M563.1 558.3l3.0 -0.6M589.1 597.8l3.5 -0.5M560.7 567.1l3.1 -3.1M588.2 570.1l2.3 -1.3M603.1 571.2l3.0 -0.4M589.1 604.4l1.0 -3.9M618.6 559.8l2.7 -2.6M638.9 576.8l1.5 -0.5M583.8 514.5l4.2 -0.3M568.0 562.1l1.4 -0.9M591.2 579.0l2.1 -1.1M626.3 531.4l2.2 -1.6M646.2 568.6l3.4 -0.9M589.5 601.8l3.3 -1.4M579.7 518.1l3.3 -2.2M629.8 537.9l1.1 -2.8M637.4 517.4l1.9 -0.7M583.9 506.7l1.5 -2.2M571.7 532.6l2.1 -0.2M585.1 547.1l0.7 -2.2M591.3 540.5l2.3 -0.1M572.9 596.8l2.9 -2.8M615.0 582.6l1.1 -1.6M625.5 550.4l2.9 -2.0M625.2 530.6l2.7 -3.3M604.3 530.8l2.0 -1.1M626.7 504.7l3.1 -0.8M588.0 599.6l1.2 -1.9M560.0 558.2l3.3 -1.2M593.8 586.0l0.8 -2.3M614.7 602.4l3.1 -1.7M626.7 541.6l3.7 -0.3M586.2 541.6l2.5 -0.7M571.4 592.5l2.4 -1.9M618.1 595.8l0.9 -2.4M559.7 544.7l3.1 -2.6M617.4 561.9l2.2 -2.4M579.1 589.3l3.8 -1.2M567.9 571.0l2.8 -1.0M638.5 595.1l3.7 -1.4M616.0 594.0l1.3 -3.4M621.4 565.0l0.9 -1.4M611.8 587.5l1.1 -1.8M574.3 510.8l4.0 -1.9M630.4 538.1l1.6 -0.7M634.4 535.8l0.6 -3.3M567.8 530.3l0.7 -2.7M607.3 586.7l0.9 -3.9M564.4 524.2l2.2 -1.2M585.6 561.4l1.8 -3.4M573.4 588.5l3.0 -0.8M557.1 553.6l1.2 -1.2M613.7 576.8l2.3 -1.5M602.7 563.6l1.9 -3.6M648.3 584.5l2.5 -0.1M648.0 508.1l1.4 -1.3M596.8 572.2l2.6 -1.1M586.7 520.8l1.6 -1.7M572.4 578.2l2.2 -1.8M573.3 574.9l1.0 -2.1M606.4 573.7l3.7 -0.1M643.4 597.3l3.4 -1.4M560.6 523.6l0.8 -4.0M622.9 567.3l1.3 -2.2M569.3 566.4l2.4 -0.0M557.9 520.0l2.6 -3.3M631.1 548.6l0.6 -1.7M568.0 583.1l3.3 -3.0M640.1 584.8l3.0 -2.6M566.0 512.3l2.5 -1.7M574.5 528.5l0.9 -4.1M621.1 599.3l2.8 -0.1M622.6 540.9l3.9 -1.0M567.0 502.8l1.5 -2.9M589.1 501.4l3.8 -0.9M597.5 504.8l3.1 -0.5M559.9 535.0l3.6 -2.1M600.5 568.1l1.0 -2.0M640.5 541.7l1.0 -3.1M565.8 522.1l2.4 -2.2M614.9 574.8l1.2 -1.2M622.8 506.6l2.0 -1.8M618.1 576.4l1.7 -3.0M620.0 551.5l1.5 -3.9M610.8 508.5l2.2 -3.9M574.8 541.8l3.8 -1.2M615.0 578.7l0.4 -1.7M647.5 585.1l0.4 -1.6M577.0 599.3l1.6 -3.1M642.2 567.2l2.3 -0.3M568.7 502.2l1.7 -0.6M646.6 576.3l1.7 -3.6M569.9 555.6l1.2 -3.7M639.2 598.2l0.7 -4.0M606.5 587.3l2.6 -2.2M611.3 584.7l0.5 -1.6M606.3 531.1l1.0 -1.1M623.9 503.0l3.8 -0.9M597.6 513.3l1.9 -1.0M594.2 511.6l3.1 -0.1M586.6 510.6l3.8 -1.5M634.8 511.6l1.5 -1.9M625.5 516.7l3.8 -2.3M627.8 501.6l0.5 -1.8M619.7 563.8l2.2 -1.8M591.8 565.2l3.7 -2.0M622.6 583.9l4.0 -0.5M621.3 504.1l3.7 -1.7M595.0 594.2l1.8 -3.9M596.4 575.2l1.2 -2.1M587.7 535.4l0.9 -2.7M646.3 568.9l3.8 -0.4M625.8 530.0l1.4 -2.4M554.9 524.6l4.2 -0.7M584.2 581.5l4.0 -1.3M629.9 557.7l1.3 -3.8M583.8 567.0l2.0 -2.4M645.4 518.0l2.7 -2.1M604.7 600.0l2.9 -3.1M620.2 602.6l0.6 -2.0M582.1 596.3l0.4 -2.2M622.4 605.2l1.1 -2.6M618.5 573.2l3.5 -1.3M578.2 528.7l0.8 -3.5M573.2 527.3l3.4 -0.2M609.6 569.8l3.0 -1.9M583.7 507.5l0.4 -1.5M588.9 516.3l1.0 -2.8M646.1 573.8l2.0 -3.2M571.1 511.6l1.5 -2.3M619.7 547.0l1.7 -0.7M642.8 536.1l1.5 -0.4M631.8 524.1l3.8 -0.8M618.5 530.2l0.4 -2.0M639.5 517.3l2.9 -1.5M617.5 519.8l0.7 -1.7M646.9 541.0l2.8 -1.5M575.8 508.8l0.8 -4.0M588.9 577.7l1.4 -3.6M578.2 539.0l1.4 -1.1M577.9 584.7l1.4 -2.2M627.2 524.5l0.9 -1.9M590.2 539.1l2.6 -1.4M635.8 506.2l3.6 -1.8M576.7 503.7l1.3 -1.3M598.4 575.6l0.6 -1.8M599.9 519.5l1.3 -2.5M565.3 508.3l1.8 -2.3M643.7 559.3l0.6 -2.1M623.5 559.5l4.3 -0.8M635.0 511.7l3.1 -0.2M576.7 518.1l2.1 -0.4M561.5 528.0l2.9 -0.3M623.6 508.7l1.8 -1.7M573.9 570.3l1.2 -1.4M648.2 551.3l0.6 -1.4M616.7 555.5l0.6 -2.8M624.6 557.7l1.4 -2.6M611.7 570.2l1.4 -3.6M643.6 578.0l2.6 -0.5M640.0 520.5l1.6 -2.9M640.3 509.3l0.7 -1.4M595.9 516.4l1.6 -3.4M609.2 600.0l2.4 -2.6M575.5 551.5l3.4 -2.7M600.8 604.7l1.9 -1.1M632.8 521.2l2.9 -0.0M575.7 602.0l1.6 -2.2M587.3 571.5l0.5 -2.6M570.1 588.6l0.6 -3.3M578.0 548.7l3.0 -2.1M567.3 527.3l1.5 -4.1M567.9 515.4l2.5 -2.0M638.7 506.9l1.0 -1.8M609.2 549.0l2.8 -3.1M616.7 590.4l2.3 -0.1M644.0 544.9l1.0 -4.1M564.2 502.8l1.3 -2.0M645.8 592.5l2.1 -2.2M634.3 585.4l2.7 -1.4M564.6 526.3l2.9 -1.5M630.1 594.4l2.1 -0.1M608.1 519.5l2.1 -0.9M576.1 539.5l2.8 -2.2M560.7 578.6l2.5 -1.5M618.6 585.4l0.5 -2.9M618.5 574.9l1.8 -1.0M645.4 583.7l1.3 -2.5M644.5 523.4l3.0 -3.2M639.3 524.9l2.4 -0.9M617.6 581.5l0.7 -2.0M575.2 528.9l0.4 -1.9M593.1 545.7l0.9 -3.1M643.4 562.0l2.2 -2.8M596.0 518.9l1.2 -1.0M617.8 518.6l2.8 -3.4M626.4 588.5l3.0 -1.6M621.1 603.2l1.6 -3.4M582.0 527.3l3.2 -0.8M634.8 592.5l1.8 -1.1M555.4 556.6l2.1 -0.9M560.9 502.1l1.5 -3.3M554.4 525.7l1.9 -3.1M648.1 504.1l1.4 -4.1M646.2 516.8l1.8 -2.5M584.6 544.6l1.7 -1.5M559.9 509.6l0.7 -1.6M613.3 574.8l2.0 -3.3M623.4 536.6l1.6 -1.3M643.0 559.8l0.5 -1.9M619.8 540.9l2.0 -0.8M630.2 585.8l1.0 -3.1M571.3 574.8l3.7 -1.0M575.5 510.5l2.8 -1.4M567.4 520.7l1.5 -1.0M614.5 526.5l1.4 -2.4M605.3 577.9l0.8 -3.6M574.4 531.4l3.1 -1.7M612.9 595.8l1.1 -2.2M617.5 528.4l0.8 -2.0M626.3 587.7l4.0 -1.7M629.4 534.0l2.1 -3.0M560.0 564.8l0.5 -1.6M601.7 516.1l4.1 -0.4M598.4 522.2l1.0 -2.8M603.1 538.7l2.8 -1.2M628.3 512.4l0.7 -2.6M600.0 527.0l1.9 -1.0M583.5 550.8l3.5 -1.5M588.2 547.1l4.3 -0.4M612.5 512.2l2.5 -2.3M579.4 504.0l4.2 -0.1M566.2 549.5l2.1 -1.2M560.2 579.3l2.7 -0.9M562.5 543.4l1.3 -4.2" stroke="#ffffff" stroke-width="0.6" opacity="0.7" fill="none"/><path d="M573.0 525.1l1.2 -1.4M577.0 515.0l0.9 -3.0M627.8 520.3l1.1 -3.6M599.5 528.0l0.6 -2.2M637.4 517.6l1.3 -3.5M631.4 557.1l2.1 -3.8M611.4 526.0l1.7 -3.2M620.7 518.6l1.3 -4.2M577.0 551.7l0.9 -2.1M587.1 534.1l1.5 -1.3M629.3 527.8l1.1 -3.6M593.0 521.1l1.8 -3.5M630.1 540.6l0.7 -3.7M611.5 555.8l1.8 -1.7M628.9 552.2l0.9 -2.4M595.8 528.5l0.8 -1.7M585.1 557.0l1.5 -3.1M631.4 549.8l1.4 -4.0M625.1 561.0l2.4 -2.9M626.1 523.7l1.6 -2.1M628.1 517.7l1.3 -2.1M626.0 528.7l2.8 -2.9M630.1 518.2l2.8 -2.5M617.0 544.6l0.8 -4.0M607.6 534.5l1.5 -3.5M624.4 554.7l0.8 -2.4M587.1 515.7l0.6 -1.5M625.6 522.2l0.4 -1.7M621.2 521.1l1.3 -2.4M625.5 559.3l1.3 -3.1M631.3 534.8l2.7 -2.6M591.3 554.5l1.0 -1.5M610.4 552.7l1.5 -2.5M598.5 554.9l1.3 -1.7M594.0 529.4l2.7 -2.4M578.4 557.3l0.6 -3.2M599.9 546.7l0.8 -1.6M605.8 552.0l1.7 -1.9M584.8 548.0l1.4 -1.6M631.2 560.8l1.2 -2.3M619.3 557.6l0.7 -2.3M592.6 548.1l0.9 -3.0M604.4 545.5l1.2 -4.2M639.3 538.8l1.4 -1.5M632.4 539.1l2.7 -3.1M595.1 556.9l0.5 -1.5M603.6 556.4l3.1 -3.0M605.2 557.4l1.0 -1.6M613.4 551.6l1.5 -2.9M587.5 525.2l1.4 -2.7M602.6 515.9l0.4 -2.5M619.8 548.5l0.8 -2.1M605.0 520.5l2.4 -3.5M583.0 540.7l2.3 -2.9M619.1 547.4l1.4 -3.8M633.7 513.6l2.1 -1.9M574.9 514.8l2.4 -2.6M578.6 534.8l2.6 -3.7M593.2 549.3l0.7 -2.0M580.6 531.5l1.4 -2.0M581.1 521.9l0.5 -2.0M591.7 536.6l0.9 -2.8M599.7 560.5l2.1 -3.8M602.5 520.7l1.1 -1.6M580.5 515.4l2.7 -3.5M597.7 528.8l1.2 -2.3M617.8 531.6l1.1 -3.9M608.8 511.6l2.6 -2.7M593.8 542.4l2.0 -1.9M599.4 526.4l1.9 -3.0" stroke="#8890a8" stroke-width="0.6" opacity="0.6" fill="none"/><path d="M861.5 433.4l4.0 -1.6M832.3 377.4l3.4 -2.4M804.5 400.1l3.9 -1.4M843.4 399.1l3.2 -1.1M813.2 364.4l2.3 -0.4M806.8 502.3l1.6 -0.0M783.3 324.4l3.3 -1.6M832.8 532.2l2.7 0.7M789.7 480.5l1.7 -0.6M885.5 266.9l1.3 -0.9M852.5 445.2l1.7 -1.1M887.5 468.0l1.7 -1.0M808.1 477.2l3.5 -0.6M838.3 355.9l3.9 1.0M877.5 424.5l2.3 -1.4M861.9 502.2l2.5 -0.0M784.4 514.1l3.9 -1.8M783.6 483.7l3.2 0.7M818.2 535.9l1.8 0.1M819.2 473.6l3.4 0.1M777.4 404.5l3.0 -1.7M798.7 366.0l4.3 1.1M857.5 393.0l4.1 -1.3M823.2 291.7l3.0 -1.9M772.6 552.4l1.9 0.1M843.9 368.2l1.6 0.2M822.2 472.1l4.0 -1.6M788.8 296.7l1.7 -1.2M826.6 355.9l2.8 0.7M830.3 513.6l3.4 -2.5M815.0 305.8l2.9 -0.7M798.0 365.6l3.3 0.2M784.6 521.1l4.3 1.2M769.0 317.3l3.1 -1.4M887.4 459.7l1.2 -1.1M803.2 426.7l4.0 -1.2M838.0 503.6l1.8 -1.0M814.2 464.6l4.4 0.6M779.4 480.3l2.2 -1.4M841.5 451.6l3.2 0.1M782.3 302.8l3.9 -0.5M785.2 406.5l2.7 -0.4M773.0 382.2l2.2 0.1M866.2 328.0l2.6 -0.6M805.9 485.4l4.0 -0.1M839.7 310.2l2.0 -1.5M776.4 450.9l2.8 -1.2M880.1 329.1l2.3 -1.0M877.3 468.0l1.4 -0.9M784.9 443.4l2.5 -0.5M778.5 478.7l2.0 -0.4M777.0 527.3l2.4 -1.3M887.2 355.9l2.2 -0.1M777.7 407.1l3.0 -1.8M879.7 501.0l2.5 -1.6M779.0 352.2l3.6 -0.4M886.5 350.6l4.1 0.4M824.3 356.9l3.2 -0.6M859.8 467.0l2.2 -0.4M803.3 363.2l2.1 0.1M863.6 325.1l3.2 -2.3M797.9 401.2l4.0 0.8M870.8 388.1l4.1 -1.7M814.5 435.0l2.0 -1.7M848.6 444.1l2.7 -2.3M839.5 343.1l4.2 0.7M828.0 292.4l2.5 -1.1M810.3 526.3l2.1 0.7M862.7 498.8l2.9 0.2M885.9 272.2l3.0 -1.6M812.6 496.5l3.4 -1.7M777.4 394.6l1.3 -1.2M776.9 366.3l2.3 -0.5M785.7 409.4l3.8 -1.4M791.0 519.8l3.1 -1.2M834.5 340.1l2.5 0.7M809.3 376.1l3.5 -0.1M820.0 377.0l2.9 0.3M822.8 314.6l3.6 -0.2M797.6 449.1l2.0 -0.2M835.1 321.7l3.2 0.4M884.0 503.4l2.7 -1.9M767.2 522.7l3.5 0.5M830.8 514.3l2.5 0.5M768.8 357.3l2.7 -2.1M779.8 304.0l3.9 -1.8M879.3 499.4l1.6 -0.8M878.9 421.0l1.9 0.3M851.3 394.9l2.0 -0.5M814.1 322.1l2.5 0.7M827.3 405.8l3.7 0.2M872.1 363.1l3.4 -1.3M827.6 491.9l2.6 0.1M864.6 283.5l2.9 -0.2M812.3 429.4l1.4 -0.4M832.8 437.1l3.2 -2.2M800.7 514.7l3.9 -0.1M827.9 299.7l2.6 0.5M767.6 536.1l2.9 -2.4M835.3 416.8l2.4 0.2M854.4 323.8l2.6 -0.1M872.3 270.9l1.8 -1.4M776.2 402.9l2.6 -1.2M780.1 322.6l1.7 -0.7M813.4 348.7l2.9 0.8M866.4 398.9l4.0 -1.3M821.3 428.3l4.0 -0.6M822.5 294.4l3.7 0.0M806.3 294.4l3.5 -1.6M780.3 474.9l1.5 0.4M853.9 366.5l2.9 -0.9M815.6 292.7l4.0 -1.8M812.6 385.7l2.4 0.7M844.7 505.5l2.3 0.1M819.9 518.6l3.6 -1.0M773.0 533.9l3.3 -1.5M768.6 368.2l1.5 -0.4M784.6 322.6l1.7 -1.2M817.0 330.7l1.6 0.2M816.1 435.4l1.4 -1.0M850.3 432.5l2.7 -1.3M844.3 281.0l2.1 -0.5M779.7 408.1l2.6 0.1M775.2 515.6l3.0 -1.5M777.0 454.3l3.4 -0.8M849.6 267.6l2.6 0.7M834.4 409.6l4.2 1.1M822.0 507.5l3.6 0.2M803.1 365.6l4.0 0.6M847.6 306.4l2.1 -0.3M807.0 285.8l2.2 0.0M869.4 354.5l2.1 -0.9M818.8 369.1l2.6 0.4M766.4 544.4l1.4 -0.7M827.2 328.7l2.5 0.7M780.2 510.3l3.9 0.0M810.1 285.7l4.3 0.0M860.7 389.0l2.4 0.2M778.8 442.3l3.2 -1.6M874.7 293.7l2.4 -0.5M787.0 548.4l2.3 -1.7M860.8 432.1l2.7 -1.2M791.0 356.5l1.3 -1.0M816.7 506.2l3.9 1.1M837.4 430.1l2.2 -0.7M811.3 404.2l3.0 -2.2M862.6 435.3l4.1 -0.4M885.6 483.0l3.4 0.6M840.7 354.5l3.1 0.8M877.3 426.3l2.2 -1.9M841.3 399.2l3.6 -0.6M805.3 518.7l1.6 0.2M845.0 496.3l2.1 -0.7M807.3 497.1l3.8 -0.6M798.3 404.5l3.4 -2.1M773.8 354.9l2.0 -1.3M851.0 429.5l3.0 0.3M870.9 503.5l3.8 0.3M842.5 506.3l3.7 -1.5M877.3 349.4l4.0 -0.1M858.8 348.0l3.5 -1.6M822.9 501.2l2.1 -1.5M873.5 303.7l1.8 0.1M846.4 280.2l4.1 -0.2M815.9 390.7l2.1 -0.8M830.7 465.9l2.3 -0.8M800.3 477.9l2.2 -0.9M796.4 333.2l3.7 -0.8M874.0 368.3l3.7 -0.2M811.2 504.4l2.9 0.2M855.0 282.4l2.3 -1.3M815.6 361.8l3.7 -2.3M834.6 318.0l2.1 -1.4M861.1 522.5l2.8 0.2M831.2 416.5l2.8 -2.2M865.3 346.1l3.4 -0.5M819.7 326.1l3.4 -2.0M820.7 470.2l3.3 0.4M830.9 447.7l2.0 -0.8M853.5 345.8l2.4 0.0M766.9 519.3l2.6 -0.4M859.4 349.7l3.1 0.3M858.1 402.2l2.1 0.2M846.8 317.2l3.7 -0.4M780.3 481.8l1.8 -1.3M849.8 423.3l4.2 1.1M767.8 526.3l1.6 -0.9M810.4 291.7l2.9 -1.5M859.6 472.5l3.8 0.9M833.8 399.3l3.4 -2.3M840.4 284.5l1.6 0.3M789.1 469.4l1.7 -0.8M784.3 413.9l1.8 0.2M841.3 515.1l3.3 -1.8M874.8 315.1l1.8 0.5M838.7 286.2l3.1 -2.3M815.8 480.7l2.6 0.6M802.9 419.3l1.7 -0.4M869.7 458.3l4.2 1.2M882.1 279.8l3.3 0.1M838.0 501.6l3.3 -2.8M855.5 317.8l3.4 0.7M825.2 403.2l3.8 -0.8M782.0 519.2l2.0 -1.0M886.5 320.2l2.3 -0.9M780.7 380.5l2.9 0.7M873.0 464.9l2.4 0.1M854.0 317.2l3.8 -0.4M779.6 318.2l3.7 0.1M845.4 432.1l3.2 0.2M884.2 282.2l2.7 0.1M821.1 433.5l1.4 -0.7M795.0 331.6l2.9 0.3M812.3 324.9l4.0 0.7M852.8 394.4l2.9 -2.3M841.1 285.3l2.2 -0.6M879.2 475.4l2.2 -1.2M805.3 437.9l3.2 -1.0M843.5 359.0l2.6 -1.8M785.1 333.6l1.9 0.4M789.2 295.1l2.5 -1.0M812.3 336.5l2.5 0.5M851.3 394.2l1.8 -1.0M773.8 333.0l3.1 0.4M805.7 330.4l2.3 -1.1M874.2 452.5l1.5 -1.3M836.7 383.8l3.6 1.1M873.8 345.4l3.4 -2.0M800.6 336.8l1.6 0.5M839.6 360.9l4.1 -1.2M846.3 408.5l1.8 0.3M786.7 328.1l3.1 -0.7M771.2 505.5l1.8 -0.8M838.6 491.2l3.7 -1.7M862.6 378.0l2.5 -0.1M781.1 371.1l2.7 -0.4M862.6 280.9l4.0 1.0M862.3 427.7l1.6 -0.8M872.9 352.1l1.8 -0.3M872.7 350.4l3.6 0.2M810.9 358.1l2.9 0.4M864.2 357.6l3.7 -0.7M815.0 514.5l2.6 -0.4M803.5 280.3l1.6 0.4M776.5 532.8l2.9 -2.0M878.8 271.5l3.4 -1.8M872.6 461.4l3.9 -0.6M825.0 511.5l3.4 -1.3M844.9 269.6l2.5 -2.0M804.6 334.9l3.4 -2.6M867.7 423.8l3.0 -1.3M775.0 293.0l2.3 -1.6M793.3 322.1l1.5 -0.7M833.7 434.7l3.6 0.1M853.4 397.1l1.5 -0.7M821.8 440.1l4.1 0.7M870.1 501.3l2.0 -1.2M808.5 361.3l3.3 -2.3M837.1 503.8l3.6 -0.6M816.3 539.7l3.1 -1.1M777.3 532.0l2.5 -0.0M862.5 392.5l4.1 1.2M869.4 316.0l2.4 -2.0M837.7 385.2l2.9 -2.2M781.0 331.5l4.1 0.7M858.0 436.2l2.1 -1.8M886.3 352.9l1.9 -0.5M862.7 310.6l2.9 -0.2M846.8 366.7l3.8 -0.3M823.3 397.4l2.8 -0.3M833.1 354.0l3.7 -0.3M844.5 516.6l4.1 -1.6M829.8 445.2l2.7 0.4M766.0 329.8l2.9 0.6M855.2 467.0l3.1 -2.6M816.0 288.4l3.8 0.4M862.0 292.6l3.2 -2.4M867.2 410.2l1.8 0.3M883.4 280.3l2.2 -1.2M772.9 385.4l2.8 0.9M815.8 426.4l2.0 -1.4M841.4 323.8l2.2 -0.7M784.1 515.1l2.0 0.5M797.8 408.9l2.9 -1.3M844.1 431.4l1.4 -0.5M885.7 494.1l1.8 -1.3M846.5 294.6l1.5 -0.3M797.7 370.8l1.7 -1.5M809.1 352.3l3.7 0.5M780.9 406.5l2.0 -1.4M841.2 370.1l3.0 -2.6M775.3 487.0l2.0 -0.8M869.9 502.2l4.1 -1.4M794.5 369.8l2.0 0.2M857.9 318.7l1.9 -1.2M873.7 453.3l2.9 -1.6M775.3 487.8l3.1 -0.4M884.0 484.0l2.8 -0.4M793.7 490.2l3.0 0.0M820.0 363.0l3.0 -0.7M803.8 287.3l1.6 -1.2M819.9 360.0l2.6 -0.5M799.8 360.8l3.0 0.1M844.6 434.3l1.5 -0.6M774.0 479.3l2.3 -0.1M873.9 322.5l4.3 -1.0M852.7 493.5l2.5 0.5M824.5 332.8l1.6 -0.3M786.0 518.1l1.9 0.3M823.7 397.0l3.8 -1.9M785.5 327.6l3.2 -0.6M821.6 396.4l3.1 0.1M773.7 372.8l3.3 -1.7M820.1 286.9l3.8 -0.7M767.0 438.8l2.8 0.1M769.9 411.2l2.6 -1.9M850.5 291.9l1.8 -1.4M883.3 515.0l3.8 0.4M838.7 291.6l2.8 -1.9M841.5 514.7l3.3 -2.9M833.9 438.3l3.3 -0.3M859.5 411.5l3.0 -1.7M882.6 430.2l4.0 -0.6M886.2 447.4l2.4 -0.3M823.6 469.8l2.4 -0.5M838.9 502.1l2.4 -0.2M796.6 409.4l3.3 -1.8M825.9 361.7l4.2 0.6M880.7 329.7l1.6 -0.1M869.8 459.9l3.4 -0.9M849.1 431.7l2.0 -1.1M769.3 447.3l3.1 0.7M828.2 398.1l1.8 0.1M844.7 406.1l3.9 -1.0M838.9 268.0l3.1 0.7M841.3 518.9l2.0 -0.3M875.8 485.9l3.1 0.6M880.2 403.1l2.0 0.0M851.9 394.0l3.5 -1.1M871.4 488.9l3.4 0.0M787.5 465.2l3.7 -1.6M767.7 360.2l4.0 1.3M872.8 276.0l3.1 -0.0M826.4 332.9l2.5 -0.1M777.6 363.6l4.3 -0.9M874.5 353.2l3.4 0.3M845.6 277.1l2.5 0.5M789.0 446.4l3.7 -0.5M887.5 273.1l1.6 -0.7M782.8 298.9l2.8 0.3M773.4 536.3l1.6 0.3M799.9 542.8l2.6 -1.8M808.6 472.2l2.6 -0.1M776.6 289.3l1.8 -1.1M846.8 358.1l2.0 -1.0M845.1 388.5l4.1 -1.5M810.5 447.2l4.1 0.3M811.6 367.5l1.9 -1.0M798.5 292.0l4.1 -0.5M867.1 318.1l2.4 -0.4M865.0 316.9l3.6 -1.6M793.9 446.9l2.9 -2.2M826.3 288.6l2.6 0.7M771.2 521.2l2.2 -0.8M812.5 436.9l1.4 -0.8M823.8 321.2l2.6 -2.0M792.0 466.2l3.4 -0.0M874.9 503.5l2.3 -0.2M848.5 508.1l2.6 -0.7M872.7 264.8l1.7 -0.4M868.9 282.0l1.7 -0.9M815.1 462.7l4.3 -0.0M872.4 515.6l3.9 0.2M824.1 513.9l2.8 -1.1M854.3 389.9l2.6 0.5M816.9 322.3l2.6 0.0M846.6 403.2l2.3 0.6M790.5 275.3l3.4 -2.2M798.2 409.7l3.9 -1.7M820.0 326.1l2.5 -1.8M844.3 282.4l3.4 -1.5M799.4 441.6l3.0 -0.7M770.1 543.8l2.9 -2.4M785.6 482.1l2.1 -1.5M875.1 425.7l2.1 -1.3M866.3 281.7l3.3 -0.7M853.3 431.6l3.4 -1.5M767.7 445.2l2.5 0.0M824.0 399.5l2.4 -1.9M797.7 432.9l1.9 -1.1M779.5 411.2l2.4 -0.1M875.9 442.1l4.1 0.5M872.9 277.1l3.5 -1.8M848.5 394.9l4.5 0.5M882.6 427.6l2.7 -0.1M826.0 408.7l3.6 -1.8M868.6 465.2l3.2 -0.6M790.3 396.6l3.5 -1.8M832.6 460.7l1.7 -1.5M778.2 502.5l3.4 0.9M862.2 430.2l1.8 -0.7M805.7 478.3l1.8 -1.2M771.5 390.2l1.8 0.4M872.9 461.9l3.5 1.1M826.8 511.0l3.8 -0.4M860.6 457.8l2.2 -0.5M831.6 432.6l2.1 -1.0M886.7 347.1l2.7 -1.4M767.9 331.4l2.0 -0.0M781.3 354.9l1.5 -1.0M862.6 519.4l4.0 0.4M858.0 269.2l1.9 -0.1M847.2 457.6l2.1 -0.5M799.7 411.4l2.3 -2.0M871.6 471.9l3.2 -0.6M835.6 393.5l4.1 -0.1M780.2 333.5l2.8 -1.1M863.7 351.2l2.7 0.3M787.3 398.4l2.7 -0.1M845.4 420.7l2.5 -1.2M865.4 480.9l1.4 -0.7M832.5 280.5l3.6 -2.2M785.6 297.2l1.8 0.2M858.4 315.8l3.5 -2.0M843.0 463.8l4.1 0.6M859.4 402.7l2.7 -0.4M806.2 374.4l3.4 -1.5M860.7 371.1l3.2 0.9M845.3 359.3l2.7 -0.4M835.0 481.1l3.1 1.0M838.0 312.1l3.7 0.0M776.3 488.4l3.1 -0.2M871.9 278.1l1.8 0.2M807.6 318.5l2.4 -1.3M818.3 453.1l1.5 -0.5M781.7 499.1l2.8 -1.3M887.7 270.4l2.5 -1.9M882.9 489.3l2.5 -0.4M811.1 425.5l4.3 -1.3M853.1 315.8l1.6 -1.4M767.4 518.2l4.2 1.1M840.0 508.5l3.9 -1.1M860.1 300.2l3.3 -0.6M882.8 457.9l2.8 -0.8M875.0 469.8l2.8 -1.5M803.8 504.4l2.5 -0.2M841.9 465.0l2.4 -1.6M812.1 296.7l2.6 -2.1M853.5 430.4l1.5 -0.4M827.3 509.3l1.4 -0.7M778.1 482.8l3.5 -2.2M862.7 356.9l1.7 -1.4M802.7 510.3l4.2 -0.1M884.8 497.9l2.1 -0.5M884.9 318.1l2.9 -1.7M782.3 479.6l3.5 0.5M882.1 428.9l3.7 1.1M821.0 293.0l2.1 -1.0M865.4 386.8l2.5 -0.7M851.9 319.9l3.8 -0.1M773.0 444.9l2.7 -0.0M833.9 412.6l1.5 -0.3M831.0 507.6l3.4 0.9M829.3 490.8l3.2 -0.5M853.3 357.9l2.6 0.1M827.4 475.7l2.0 -1.7M837.5 393.8l2.2 -1.1M809.1 510.9l1.5 -0.1M866.4 389.5l2.6 -0.6M781.6 323.0l2.3 -0.6M848.6 522.1l1.4 -1.2M803.1 295.9l3.5 -1.3M816.2 448.8l4.1 -0.4M873.2 296.8l3.5 0.8M840.5 364.9l4.4 0.5M822.4 512.9l3.7 -1.1M766.2 415.1l3.3 -3.0M802.7 536.2l3.6 -1.3M825.5 398.1l3.7 0.1M773.1 522.7l3.5 1.1M853.7 320.7l2.5 -0.5M812.3 434.8l2.4 0.1M810.9 357.8l1.7 0.3M792.3 330.5l2.8 -0.2M843.6 311.3l3.0 -1.1M797.2 477.7l3.7 0.2M804.0 331.3l1.9 -1.3M844.4 361.9l1.4 -0.9M836.4 474.0l2.7 -2.2M785.5 379.0l2.0 -1.5M813.8 507.4l3.4 -1.1M779.3 401.5l3.5 -0.2M792.1 325.2l3.9 -1.6M881.3 283.5l3.5 -2.0M802.3 401.7l3.0 -0.0M797.4 331.9l3.3 -2.7M830.7 431.4l3.6 0.4M831.9 430.5l2.8 0.3M784.5 512.3l3.7 0.2M842.0 530.5l1.8 -0.7M843.8 321.6l1.7 -1.1M831.8 393.1l2.3 -2.0M796.8 283.3l2.3 -1.5M785.3 394.4l4.1 0.2M823.8 523.2l4.2 0.1M828.7 510.8l1.4 -0.7M850.2 386.0l2.2 -0.8M875.5 277.7l2.3 -0.3M853.9 452.2l3.8 -0.0M789.7 283.8l1.8 -0.3M855.0 384.4l3.2 -0.9M841.6 501.8l3.4 0.9M779.4 449.2l3.8 -1.3M879.2 437.7l1.6 0.3M779.5 453.2l3.6 0.2M879.8 465.1l3.4 -1.2M783.1 397.8l2.1 0.1M832.1 440.8l3.9 -0.9M841.6 328.2l1.6 0.3M858.7 315.1l1.9 -1.5M835.3 268.1l1.9 -0.1M875.4 270.9l2.6 0.8M833.5 434.9l2.4 -1.0M857.6 471.1l3.2 -2.1M875.8 320.8l1.7 -1.1M775.7 355.3l3.4 -2.2M829.2 509.1l3.4 0.7M814.4 470.4l4.1 0.1M880.8 313.5l2.1 -0.7M827.0 326.3l3.0 0.2M794.3 372.0l1.9 -0.7M804.3 272.8l3.2 0.6M779.2 447.5l2.4 -0.0M765.7 377.0l3.2 -2.6M812.1 396.0l3.0 -1.8M810.2 403.5l2.6 -1.9M865.8 385.8l1.6 -0.1M844.1 461.9l3.9 -1.2M806.6 395.2l2.6 0.5M881.1 425.9l4.2 -0.7M850.7 503.2l1.9 -0.2M876.7 457.2l1.6 -0.3M873.6 505.5l3.8 -0.9M768.3 375.6l2.6 -0.2M868.2 396.6l1.4 -1.2M765.7 525.2l2.7 -1.1M834.7 322.1l4.4 -0.3M777.4 344.5l1.9 -0.9M842.6 436.6l3.1 0.4M808.4 405.2l3.0 -1.8M867.0 452.3l3.6 -1.2M781.8 407.4l2.5 -0.4M767.5 467.1l3.1 -0.3M856.9 517.6l2.6 0.1M851.1 464.8l2.7 0.7M822.7 470.0l2.4 0.5M874.2 298.8l2.2 -0.3M855.7 462.6l2.5 -2.1M879.2 501.1l3.0 0.4M794.2 473.6l2.8 -0.9M878.0 303.4l3.6 -1.0M886.7 460.8l1.6 -0.5M813.7 481.9l2.7 -1.6M875.3 449.7l2.1 -0.6M885.4 347.3l2.5 -0.1M833.6 473.7l2.7 -0.0M783.6 365.7l2.9 -2.5M830.3 400.1l1.5 -1.2M825.1 429.3l4.3 1.1M834.2 423.4l4.2 -0.6M829.0 328.8l3.7 -0.6M787.4 276.2l2.7 -0.2M877.8 456.2l3.3 0.1M848.6 320.4l2.7 0.6M808.1 312.8l1.9 -0.4M794.6 475.5l2.7 -0.3M866.9 501.6l1.5 -0.8M810.7 469.5l2.7 -0.3M782.1 488.3l3.8 0.4M818.8 392.5l3.0 -2.0M783.9 324.3l3.8 -0.6M776.5 334.9l3.8 -1.8M803.4 328.9l3.1 -0.5M791.2 334.0l3.3 -2.0M872.2 381.6l2.4 -0.3M798.9 329.1l2.5 0.6M837.2 321.6l2.4 -0.3M839.7 418.9l2.2 -1.6M832.3 386.2l3.5 -0.8M880.8 367.4l3.0 -0.9M860.3 325.2l2.1 0.0M869.0 425.7l3.7 -0.7M792.9 543.6l2.8 -1.8M830.6 361.4l3.9 -1.3M850.3 365.0l2.5 -0.3M832.6 453.6l3.1 -2.5M871.0 281.9l3.8 -1.1M803.9 542.7l1.6 0.4M864.3 427.3l1.4 -1.2M866.2 459.8l1.7 -1.2M767.4 421.2l1.6 -0.2M816.2 492.4l2.5 -1.4M812.7 519.2l3.2 -0.6M867.2 352.9l4.3 1.2M834.2 356.8l3.5 0.1M808.9 325.2l2.0 -0.3M828.7 361.1l1.5 -0.9M816.3 427.4l2.9 0.2M798.6 480.1l1.4 -0.8M885.2 351.3l1.3 -0.7M798.9 442.4l1.9 -1.4M874.8 432.2l1.3 -1.0M791.6 440.9l3.9 -0.8M886.9 346.3l3.8 1.1M833.3 347.0l2.7 -0.8M836.0 285.7l2.1 0.0M837.7 438.1l2.4 -1.9M879.0 467.9l1.7 -0.8M836.4 381.5l3.2 -2.5M886.9 501.9l3.6 0.2M819.7 412.2l2.2 -1.2M808.7 454.4l3.6 -1.9M860.1 313.4l3.9 0.5M794.0 401.0l1.7 -1.5M775.6 478.9l3.7 -1.0M867.2 462.9l1.6 0.4M881.0 391.1l1.8 0.1M837.3 282.3l2.4 -1.0M801.8 477.9l3.3 0.4M850.6 394.8l2.3 -0.3M883.0 462.1l3.4 -1.1M844.9 300.6l2.8 0.6M863.1 320.5l3.5 -1.8M802.9 287.0l4.3 -1.1M854.1 393.6l1.7 -0.9M823.6 448.0l2.0 -0.5M839.1 358.6l2.7 0.2M811.7 278.9l3.9 -0.3M805.8 365.6l2.7 -0.6M834.7 290.4l1.8 -0.8M829.3 466.8l3.4 -0.7M835.2 464.7l2.4 -0.8M781.0 475.2l4.0 1.3M876.3 333.7l1.8 0.2M813.0 395.2l2.1 -1.1M866.6 448.8l3.4 -1.2M808.0 528.2l1.8 0.2M826.0 387.9l3.9 -0.3M793.5 329.0l1.5 -0.3M810.8 447.1l3.1 -2.6M779.3 442.6l2.1 0.5M772.6 480.1l2.3 -0.2M777.3 528.8l3.3 -1.1M770.1 534.9l2.7 0.8M836.7 437.1l3.7 -0.8M770.8 485.7l2.3 -0.3M872.0 274.8l2.9 -1.6M813.2 533.1l3.8 -1.9M792.7 497.2l4.0 0.9M776.5 330.1l4.3 1.3M767.2 448.7l1.7 -0.9M830.6 527.1l3.3 0.1M873.6 356.0l2.3 0.3M811.6 510.0l1.5 -0.3M859.3 380.2l1.8 -0.6M807.2 300.6l3.0 -1.4M774.4 516.5l1.5 -0.9M830.0 360.9l2.1 -1.5M868.7 432.6l1.7 -0.1M779.7 524.5l3.9 -0.1M820.1 430.1l3.5 0.4M775.5 467.1l2.0 -0.5M782.3 334.9l4.1 -0.5M860.5 354.8l1.8 -0.1M853.2 510.6l2.5 -1.4M868.7 482.9l1.8 -1.1M782.8 520.0l2.5 -0.8M819.5 510.8l3.1 -1.0M873.3 465.3l3.2 -0.2M795.2 508.4l2.1 0.1M847.1 360.1l1.7 -0.1M786.9 479.7l2.2 0.7M878.7 415.5l1.8 -1.4M884.8 350.6l1.6 -0.3M859.4 318.4l1.6 -0.1M885.1 464.9l3.2 0.7M792.3 493.9l1.5 -0.9M884.3 312.6l2.5 0.2M796.5 473.2l3.5 -1.1M866.4 298.1l3.3 -1.9M847.9 471.5l2.6 -1.4M797.1 494.7l3.4 -0.9M838.9 415.4l1.6 -0.8M778.6 373.2l3.9 -0.6M789.6 433.2l1.7 -1.3M871.1 276.9l2.6 0.4M805.1 300.2l4.2 0.1M798.7 402.7l1.7 -0.8M816.2 499.5l3.9 -0.7M834.4 359.2l4.5 0.4M801.9 400.4l3.3 0.5M809.3 294.9l1.6 -0.8M884.7 422.5l3.0 -0.8M866.6 383.2l2.4 -0.6M841.4 346.0l3.8 0.3M851.0 439.0l3.9 -0.8M862.0 433.3l1.4 -0.9M799.3 330.3l1.7 -0.7M882.6 429.4l3.3 -2.6M796.0 487.1l1.7 -0.8M852.9 323.3l2.6 -0.5M820.0 366.9l3.0 -2.1M829.9 393.6l4.2 -1.5M815.4 497.1l2.3 -0.2M784.6 512.3l2.7 0.3M816.6 540.7l1.7 -1.1M806.7 408.4l4.1 -1.0M870.7 404.7l2.5 -2.0M868.2 354.7l3.1 0.2M835.4 470.1l3.2 -2.4M864.6 388.0l1.9 -0.5M811.7 391.8l3.5 -2.3M849.7 372.6l3.2 -2.1M845.6 344.6l4.3 -0.3M830.0 317.6l4.3 0.1M790.9 327.2l1.9 -1.1M816.9 327.1l2.0 -1.1M817.5 306.4l1.2 -0.9M772.5 302.7l2.2 -1.2M777.8 440.7l3.5 -0.7M820.3 318.9l2.6 -0.0M801.1 279.9l2.9 0.6M868.5 510.1l3.7 -2.0M851.6 323.8l3.2 -2.8M807.9 399.9l4.2 0.5M809.6 324.5l3.2 0.8M871.8 313.7l3.1 0.7M862.1 498.1l3.6 -0.0M765.9 287.9l3.8 -0.4M807.6 325.5l3.4 -1.2M831.9 324.1l4.1 -0.1M843.5 269.4l2.0 0.2M796.5 458.3l2.1 -1.4M880.2 343.1l4.3 1.0M773.3 355.5l2.8 0.5M784.3 275.8l3.0 -2.2M862.4 275.8l2.0 -0.1M818.7 300.5l3.0 -0.7M768.7 384.6l2.8 -1.7M839.9 520.6l1.8 0.2M781.4 292.0l3.3 -1.0M880.1 384.7l2.5 -0.8M849.7 388.3l1.9 -1.1M830.9 403.7l2.7 -0.8M782.2 400.3l2.8 -0.7M767.6 300.9l2.3 -0.6M777.9 435.8l3.6 -0.6M767.0 404.5l3.5 0.7M867.3 454.2l3.7 0.4M825.1 533.3l2.5 0.6M832.4 495.1l1.5 -0.3M770.5 543.0l1.8 -0.5M798.4 394.6l3.6 -0.4M836.2 430.7l1.5 0.4M780.0 480.7l2.2 -1.9M777.4 447.5l3.5 -2.4M836.0 441.7l2.1 -1.3M813.3 484.6l2.7 -1.5M849.8 350.4l2.1 -1.5M811.5 495.6l3.5 -1.4M879.3 311.5l3.8 -2.3M835.9 335.3l3.0 -0.4M820.1 368.9l3.0 -1.0M770.0 411.8l2.4 -1.7M841.3 360.8l1.7 -0.1M833.6 324.0l2.7 0.0M830.8 323.9l1.5 -0.3M880.3 467.2l3.2 -1.6M816.3 352.4l3.6 -0.4M859.9 301.0l1.9 -0.1M858.4 359.0l4.2 -0.4M803.0 288.4l3.9 -2.1M887.4 441.3l1.7 -0.7M769.1 325.4l3.0 0.8M776.2 525.9l3.9 0.0M826.5 340.5l2.5 -1.9M784.4 412.2l2.1 0.4M769.5 297.4l4.0 -1.6M862.1 354.2l2.4 -2.1M843.0 442.4l4.1 -1.0M792.2 312.2l2.9 -2.4M791.5 510.5l2.2 0.4M801.8 414.3l3.3 -1.6M845.2 360.7l3.3 -0.4M877.5 426.0l2.8 -0.7M766.5 388.2l3.7 -1.8M857.0 392.1l3.0 -1.1M855.3 431.6l2.4 -0.8M845.8 389.6l2.2 -0.8M841.8 519.4l3.1 -0.2M792.7 330.4l3.6 1.1M819.6 386.2l2.2 -0.3M879.9 428.6l2.0 -1.0M827.2 407.8l2.1 -0.0M804.3 283.9l1.6 -0.9M804.7 307.5l4.4 0.2M814.6 469.8l2.1 -1.2M807.3 331.2l2.1 -1.6M865.8 315.3l1.8 -0.2M868.3 509.9l2.5 -1.7M780.8 369.7l2.5 -1.9M802.4 277.8l3.7 -0.8M860.8 345.2l2.4 -0.6M805.2 293.0l2.0 0.4M806.0 290.5l3.9 1.0M886.5 275.8l3.4 -2.8M786.6 374.2l4.4 0.0M783.5 478.2l2.1 -1.5M781.1 465.8l1.7 0.3M866.8 312.7l4.3 0.1M785.4 531.3l1.6 0.4M834.8 497.9l3.5 1.1M777.3 276.8l3.3 -1.8M859.7 463.9l1.9 0.5M855.3 506.8l3.0 -1.2M859.9 282.5l3.9 0.2M817.8 323.8l2.4 -1.1M861.7 352.4l1.6 -0.2M770.5 382.9l2.4 0.1M846.9 452.4l2.5 -0.2M791.4 470.3l3.2 -2.6M883.6 386.4l2.7 -0.5M841.3 280.5l2.6 -1.8M836.1 331.7l4.0 -0.3M881.9 500.9l2.2 -0.3M801.6 514.7l3.1 -0.7M767.3 288.3l3.8 0.4M871.6 476.7l3.6 0.3M829.6 285.4l2.4 -1.4M852.7 482.8l4.0 -1.8M779.9 297.0l1.6 0.5M857.8 298.5l1.2 -1.0M855.5 528.5l1.4 -0.9M815.8 351.8l1.8 0.2M887.1 420.4l3.5 -0.1M877.4 490.1l3.1 -1.1M820.8 298.6l3.2 -2.8M858.7 433.0l3.9 -0.1M799.0 473.8l1.2 -0.9M836.3 429.2l2.0 -0.3M772.6 315.1l1.9 -0.6M879.9 346.3l2.1 -1.6M867.2 391.3l3.4 -1.9M848.7 395.6l3.1 -0.9M835.8 357.2l2.8 0.8M780.7 376.4l4.1 0.7M812.3 346.7l3.8 0.9M847.2 287.3l2.9 0.5M817.6 449.8l3.1 -1.7M781.0 367.3l4.5 0.3M867.7 312.7l3.1 -0.3M837.8 370.3l4.1 -0.1M827.2 501.5l4.2 -1.4M869.3 392.1l2.7 0.0M841.2 345.6l1.6 -0.4M787.3 402.1l1.7 -0.2M875.6 345.5l2.1 -0.1M852.4 431.9l1.6 -1.4M783.4 331.8l2.8 0.2M850.6 356.3l2.3 -1.4M880.1 341.3l2.6 -0.0M776.3 413.7l3.4 -1.5M771.2 486.1l1.4 -0.7M823.8 272.4l1.5 -1.0M781.6 351.9l3.7 -1.7M842.7 318.9l3.6 0.0M871.1 425.2l3.7 -0.0M823.9 451.1l2.2 -1.0M818.6 408.9l1.7 -0.0M796.0 431.9l3.6 -1.5M854.2 367.9l4.1 0.2M799.2 367.6l2.3 -0.3M814.9 412.9l2.6 -0.9M856.2 302.8l2.9 -0.2M766.6 279.2l2.0 0.4M784.0 353.8l2.7 -1.6M795.5 511.3l1.5 -0.4M794.5 327.2l4.3 0.6M828.4 433.0l2.9 -0.5M852.9 398.2l1.8 -0.8M882.4 352.2l3.7 0.6M850.5 299.6l3.2 -1.3M770.0 454.1l2.0 -1.2M833.1 471.6l1.5 -0.8M823.8 281.7l2.4 0.2M879.7 435.4l3.7 1.1M793.1 365.8l2.1 0.1M835.1 328.2l1.5 -0.2M828.8 488.4l3.0 -0.8M786.1 300.3l4.1 1.0M769.1 332.1l3.3 -2.9M782.9 294.8l2.3 -1.0M811.6 512.4l1.8 -1.4M792.8 360.6l3.7 -0.1M770.6 298.5l3.8 0.7M787.5 463.6l2.2 -0.1M809.7 460.9l1.7 -0.4M831.0 402.0l3.6 1.1M787.3 303.0l2.9 -2.1M864.9 503.3l1.8 -0.1M786.5 404.1l3.3 -0.3M797.0 519.7l3.7 0.3M859.4 323.9l3.6 0.4M856.8 495.6l3.4 0.6M847.6 371.0l1.7 0.3M838.0 326.8l2.7 -1.4M775.7 551.2l3.7 -1.5M847.7 346.3l2.1 -0.3M856.9 433.9l4.4 0.4M821.2 361.5l4.3 -0.8M785.4 371.5l2.8 -2.3M877.5 326.1l3.6 0.0M880.3 502.9l1.9 0.0M844.7 362.0l1.6 -0.7M865.1 485.2l1.5 -0.3M811.2 515.2l2.4 -1.6M776.5 301.0l2.1 -0.3M825.1 457.5l1.3 -1.1M862.9 466.9l2.2 -0.9M871.3 501.9l4.2 1.3M873.3 282.8l2.8 -1.8M827.0 283.2l3.3 -0.8M814.7 397.0l3.6 -0.0M770.3 317.1l3.3 -0.4M778.3 409.9l1.7 -0.0M865.3 410.2l1.7 -0.5M778.3 498.0l1.5 -0.5M862.2 362.3l3.4 -1.2M883.1 388.5l3.1 -1.1M857.4 342.3l2.4 -1.1M866.5 393.6l3.4 0.3M834.4 513.1l2.7 -1.3M813.5 518.2l1.9 -1.2M804.0 542.3l4.3 -0.1M865.1 428.2l3.8 -2.0M871.5 321.7l2.4 -0.2M791.7 516.6l2.7 -0.2M864.2 494.5l3.2 -1.8M776.6 333.1l2.2 0.2M797.7 406.2l2.6 -1.0M869.0 345.2l3.3 -2.5M814.1 307.1l3.6 -1.2M776.0 387.5l2.8 -1.5M805.4 325.3l1.4 -0.8M775.8 298.4l3.6 1.1M818.3 341.4l3.2 -2.7M812.8 462.3l1.2 -0.9M794.3 400.6l2.5 -1.4M850.4 388.4l2.1 -0.1M801.1 432.2l3.8 -0.8M883.4 282.8l3.2 -0.8M882.7 287.7l3.8 -0.9M769.5 369.8l2.0 -0.6M773.9 484.3l3.5 -0.6M877.6 278.2l3.0 -0.8M867.5 270.5l1.4 -0.7M825.5 510.8l4.3 -0.9M838.4 395.8l4.3 -0.9M802.4 404.8l1.8 -0.1M777.6 502.9l2.4 0.3M882.3 354.0l2.2 -0.1M865.1 398.9l2.2 -0.2M798.4 280.2l1.7 -1.0M823.7 512.5l1.4 -0.7M874.9 355.4l4.2 -1.3M822.1 364.6l4.0 -1.4M821.3 332.1l2.4 -1.6M799.2 330.8l3.6 -0.4M817.6 470.0l3.7 0.4M808.0 290.9l3.6 -2.3M788.1 364.5l3.0 -0.2M850.6 501.3l2.8 0.6M865.6 338.8l3.1 0.5M780.5 526.2l2.6 -1.6M852.8 427.6l3.5 0.3M858.9 282.3l3.5 0.2M851.8 463.5l1.6 0.3M777.5 384.4l2.4 -0.9M779.0 497.7l3.6 -2.1M828.1 359.9l1.5 0.4M815.3 471.7l2.0 -0.5M848.8 499.0l3.0 0.5M842.8 514.4l3.5 -0.9M767.5 373.2l2.9 -0.8M781.8 393.4l1.8 -0.5M886.8 318.2l3.5 -0.4M808.9 473.9l4.3 0.5M865.3 274.0l2.6 -0.5M788.5 432.8l2.3 -1.5M863.3 518.2l1.5 0.4M809.4 409.9l1.7 -0.7M831.0 297.7l2.3 -1.7M833.8 506.5l1.4 -1.1M771.3 433.5l2.2 -1.2M795.6 344.6l3.0 -1.2M834.4 475.5l2.4 -2.1M871.8 483.7l1.5 0.5M881.6 480.0l1.9 -0.1M817.6 295.0l2.4 -2.0M878.1 352.6l1.7 -1.3M792.6 487.1l3.2 -0.7M833.1 514.7l4.1 0.0M829.6 326.3l2.2 -0.6M768.9 421.2l1.9 -0.2M799.5 366.8l3.3 -2.6M787.3 378.6l2.8 0.7M856.7 358.9l2.7 -2.0M805.0 293.2l1.8 -1.2M852.3 318.6l2.4 0.6M879.9 393.4l2.7 -2.4M768.3 285.9l2.6 -1.2M836.5 503.6l1.4 -0.5M839.6 289.9l1.6 -0.9M855.1 432.0l3.9 -0.2M879.8 385.8l2.1 -1.3M825.6 444.0l2.7 -1.0M839.6 335.2l1.9 -0.3M879.6 350.6l3.3 0.5M769.6 338.0l3.1 -0.9M788.8 322.0l1.8 -0.6M853.7 424.1l3.4 -0.7M819.0 476.6l2.8 0.2M784.2 416.0l1.7 0.2M834.8 354.4l1.7 -0.0M844.9 324.1l2.7 -0.2M772.1 300.3l3.6 -1.2M806.9 436.8l3.7 -2.5M885.8 323.4l3.6 -0.2M867.8 288.5l2.3 -0.5M781.9 297.7l1.8 -0.5M844.7 359.6l2.1 -1.7M879.6 271.3l2.5 -0.6M864.5 411.6l3.8 -0.5M858.9 306.6l1.5 -0.3M818.1 294.3l3.9 -1.4M864.9 386.4l4.1 0.3M837.2 414.1l2.0 -0.7M859.2 457.3l4.1 -0.5M796.9 437.0l3.9 -2.2M866.7 497.6l1.8 -0.6M862.2 483.1l4.2 -0.1M809.5 324.8l2.7 -0.2M807.8 292.7l3.3 -0.1M821.0 513.1l2.3 -1.2M865.3 478.3l4.4 0.5M841.0 324.6l2.5 0.4M873.5 352.4l1.6 -1.2M805.5 274.5l3.9 0.7M818.1 451.5l2.3 0.6M789.5 401.8l3.6 -0.8M816.4 394.5l2.1 -1.2M791.2 443.3l3.7 0.1M830.4 399.2l2.3 -1.0M804.2 438.6l2.8 -0.7M852.2 505.6l1.6 -0.2M847.1 362.4l2.3 -1.4M859.0 362.8l2.4 -0.1M883.7 360.6l4.0 -1.3M869.7 273.9l3.4 -1.8M871.4 500.2l2.3 0.3M882.3 392.6l2.6 -0.3M878.4 319.4l3.7 -0.0M802.8 292.9l3.3 -2.2M767.3 520.5l4.1 -0.8M861.3 457.9l1.5 -1.1M862.5 317.5l3.7 0.2M850.3 283.0l3.1 -2.5M834.1 442.0l3.8 0.4M824.3 286.9l3.0 -0.2M814.8 511.9l1.9 0.0M853.3 443.2l1.5 -0.4M794.0 443.7l2.1 -1.6M799.5 495.5l3.5 -0.2M831.3 287.3l2.0 0.5M882.3 304.2l3.1 -2.6M806.9 446.1l3.4 -0.8M799.8 295.5l1.5 -0.1M817.6 509.8l4.4 -0.1M790.2 373.6l3.2 0.7M841.9 488.6l3.1 0.2M842.2 284.7l2.7 -2.0M868.4 462.5l2.8 -2.2M807.1 357.7l2.8 0.4M833.2 290.5l1.9 -0.1M775.9 550.7l1.6 0.4M810.8 443.3l3.8 -1.9M804.2 378.7l1.8 -0.5M847.3 355.7l2.0 -1.1M765.9 555.2l2.4 -1.4M835.5 300.8l4.2 -0.8M805.0 446.6l4.1 0.8M818.8 520.4l1.7 -0.8M866.3 477.3l3.0 -0.1M785.5 445.7l2.9 -1.5M813.2 310.8l2.9 -2.4M841.8 427.6l2.6 -1.1M779.2 423.9l2.6 -0.5M881.2 393.5l2.0 0.1M850.3 357.6l3.2 -1.5M822.4 321.9l2.1 0.2M786.9 415.2l2.0 -0.6M871.0 422.0l1.5 -0.4M875.2 520.8l4.2 1.4M818.0 287.3l3.4 1.1M821.9 350.2l2.3 -0.7M824.4 508.9l3.7 -0.5M843.7 320.7l3.2 0.2M830.8 447.8l3.4 -1.7M788.1 370.5l4.0 0.5M780.9 459.2l1.5 -0.7M886.4 291.1l2.9 -0.6M787.3 328.7l3.5 0.4M833.8 288.4l2.2 -1.9M871.4 280.8l2.3 -1.6M798.7 294.4l2.2 0.3M879.0 374.5l2.4 -0.4M868.2 287.5l3.3 -2.3M820.2 437.7l2.6 -0.7M806.7 271.7l4.3 1.0M841.2 295.5l1.5 -0.6M854.9 500.9l1.8 0.2M853.6 463.6l2.9 -0.3M818.2 397.9l2.5 0.4M834.2 372.3l1.5 0.0M872.8 269.8l2.8 0.1M802.2 402.0l2.6 -0.1M880.7 328.4l3.9 0.1M832.3 469.5l4.1 -1.3M878.5 502.3l3.3 -1.6M778.9 393.2l2.0 -0.6M799.9 483.7l1.8 0.6M780.5 419.5l3.4 -0.2M857.5 468.3l2.6 -1.4M780.2 367.8l4.1 -1.0M857.2 503.9l2.0 0.1M830.8 321.3l3.7 0.3M817.4 324.4l3.7 0.6M799.8 313.3l4.0 -0.9M877.7 313.7l1.9 -0.7M798.9 450.8l3.3 -2.4M865.3 265.4l2.3 -2.1M819.8 474.2l1.8 0.1M884.8 492.7l3.0 -2.6M842.8 409.5l2.6 -0.6M810.5 283.9l3.0 0.4M779.1 518.6l3.2 -1.3M785.1 397.1l1.5 0.4M827.3 284.0l1.8 -1.5M841.7 499.7l2.1 -0.1M793.2 336.0l3.0 -1.4M868.8 483.5l2.0 0.6M853.3 350.6l1.6 0.0M796.0 290.5l3.2 -2.6M885.5 496.6l1.6 -0.3M820.4 503.4l2.2 -1.4M774.4 448.4l2.5 -0.2M812.2 512.1l3.1 -0.9M772.1 403.9l3.8 0.9M793.6 379.0l1.7 -1.4M768.7 327.4l3.1 -1.2M766.7 365.3l2.6 -0.0M799.9 297.5l1.9 -0.8M851.1 384.4l1.8 0.5M832.0 486.7l3.4 -1.9M850.2 292.2l3.1 -2.4M844.1 360.5l2.2 -0.5M787.1 406.2l3.0 -2.4M789.2 304.7l3.6 0.3M806.3 402.2l1.6 -0.3M800.4 543.4l3.4 0.0M822.4 524.5l2.3 -0.3M768.4 346.9l3.7 -0.9M833.7 432.2l3.7 -0.7M839.7 357.1l3.7 0.9M802.4 382.5l2.8 -0.7M872.3 503.0l2.6 -1.4M880.1 318.7l1.5 0.2M785.0 295.0l4.1 -1.3M806.0 523.9l1.9 -0.5M872.6 452.5l2.9 0.5M769.0 366.5l3.1 0.9M779.0 408.2l3.8 -1.7M806.4 473.0l2.8 0.1M858.5 432.6l2.8 -1.2M781.7 334.1l3.7 -2.1M830.2 352.1l2.4 -1.2M842.9 378.4l4.4 -0.2M865.8 385.4l3.8 0.5M842.9 396.4l3.5 0.5M846.7 501.9l4.0 0.4M878.8 314.4l3.2 -2.6M836.5 340.4l3.1 0.6M770.3 521.2l4.3 0.2M811.9 359.6l3.0 0.8M844.2 288.0l3.3 -0.9M812.2 477.8l2.7 -1.4M846.6 502.9l1.9 -0.4M859.5 458.4l4.0 1.3M807.1 514.1l2.5 0.4M772.3 364.4l3.9 -0.4M784.8 476.3l2.2 -1.2M810.7 401.5l3.9 0.4M885.5 430.4l2.1 -0.4M822.8 437.1l2.3 -1.8M828.4 285.9l4.3 -0.2M816.2 334.7l1.5 -0.7M848.7 357.8l2.2 0.3M843.1 504.4l3.7 -2.1M773.7 393.4l2.4 -0.4M841.3 323.5l2.0 -1.4M803.8 401.9l1.5 0.5M812.9 291.1l3.1 0.6M807.3 406.0l1.9 -1.5M787.0 492.4l3.0 -0.4M881.2 400.8l3.0 -0.5M826.4 470.8l2.3 -0.1M766.8 368.3l2.8 0.2M819.3 438.1l4.0 -0.7M884.8 307.7l3.8 -1.9M840.0 422.3l4.4 0.4M793.8 342.4l2.2 0.3M786.6 517.4l2.1 -0.6M816.6 333.6l2.2 -1.8M803.7 330.2l2.9 0.3M869.8 500.7l2.2 0.3M834.2 428.3l1.6 -1.0M777.7 516.7l2.7 -1.0M836.2 464.1l1.5 0.4M778.7 345.2l2.4 -2.0M820.8 311.1l3.6 -2.1M818.3 402.6l3.1 1.0M854.5 526.5l1.7 -1.3M776.4 338.0l3.0 -2.4M804.9 530.7l1.9 -1.1M882.6 521.0l1.6 0.4M851.1 393.2l2.2 -0.2M788.4 318.5l1.6 -0.6M802.0 292.4l3.8 -1.9M866.0 281.9l1.9 -1.0M794.3 450.2l4.1 1.0M875.8 349.6l3.5 0.3M874.7 501.2l1.4 -0.8M767.9 377.2l2.3 0.3M864.5 483.3l3.5 -1.6M849.4 382.2l2.2 -1.3M840.4 270.8l2.8 -0.5M777.3 371.0l3.8 0.2M873.6 313.6l3.2 0.7M769.0 325.6l3.4 -0.7M862.1 473.2l1.5 0.5M789.0 445.3l3.4 -1.1M818.0 288.5l2.8 -1.7M878.5 500.8l3.4 -2.0M792.2 405.1l1.5 0.0M875.8 345.1l3.7 0.5M794.7 439.6l4.1 0.3M862.9 275.9l1.6 -0.4M852.0 319.1l2.3 0.4M883.0 349.6l4.0 1.0M788.2 372.7l3.2 0.3M839.5 328.2l2.3 0.3M878.6 384.2l3.7 0.1M811.1 403.5l2.3 -1.7M808.4 443.9l2.7 -1.1M804.9 331.4l2.2 -0.8M810.9 460.7l1.7 0.5M801.9 474.1l2.2 -0.9M830.0 331.3l1.8 -0.2M828.7 395.9l3.8 -0.7M809.5 296.5l2.9 0.0M814.8 364.8l1.7 -1.1M856.4 273.4l3.6 -2.0M856.7 274.9l2.9 -1.8M814.9 493.9l3.2 0.6M780.5 373.7l1.4 -0.6M786.5 276.4l1.6 -0.3M790.9 405.2l1.9 -0.0M827.9 381.6l4.2 0.9M882.6 330.6l4.2 -0.0M832.5 433.5l3.9 -0.7M832.8 477.7l4.1 -1.0M879.0 279.0l3.5 -2.2M884.5 313.4l2.9 -1.5M821.3 404.9l1.5 -0.4M835.6 460.5l2.4 -1.4M866.3 477.5l3.2 -2.2M853.0 434.4l2.2 0.5M820.7 288.6l3.0 -0.0M818.9 476.5l2.3 -0.9M831.0 399.8l1.4 -0.6M842.5 288.4l2.0 -0.7M778.5 486.3l2.6 -1.7M849.3 507.1l1.4 -0.8M830.7 464.6l1.9 -0.9M869.0 428.4l2.1 -0.8M885.2 298.5l2.5 -0.0M821.2 513.7l2.9 -1.6M793.9 391.2l3.5 -0.2M775.7 549.1l1.2 -1.0M814.5 477.0l3.7 1.0M783.1 489.9l1.6 0.0M774.4 406.2l2.3 -1.5M786.2 522.4l4.4 0.1M879.4 366.1l1.7 -0.6M810.6 470.0l3.2 -2.7M869.4 431.5l4.3 -0.3M782.4 328.8l2.0 -0.5M816.1 420.9l1.2 -1.0M797.2 440.3l3.0 -0.5M874.7 465.6l2.4 -0.2M841.9 372.3l3.1 0.1M791.4 415.5l3.9 1.0M875.7 448.2l3.1 -0.7M831.6 341.8l2.0 -0.9M883.5 305.5l1.8 0.5M769.0 373.2l4.1 -0.2M863.8 320.9l1.8 0.2M778.8 463.4l2.9 0.7M819.2 452.1l2.8 -1.3M860.0 453.9l2.6 0.7M827.0 405.8l4.0 -0.4M787.0 441.7l3.6 -2.0M782.6 489.7l2.3 0.5M837.7 470.0l3.2 -1.2M849.2 353.6l2.5 -0.0M881.6 407.4l2.5 -2.0M830.5 299.1l2.2 0.3M838.1 361.2l3.2 -1.1M828.5 467.5l2.0 0.6M813.2 475.0l1.9 -0.4M860.3 415.5l2.9 0.8M825.7 309.5l4.2 0.3M873.6 423.2l2.7 -0.2M854.7 462.3l3.2 -0.9M830.5 470.5l3.4 0.0M797.5 405.9l2.8 -1.3M813.0 291.4l3.2 -0.1M879.9 388.6l3.6 0.8M821.8 393.7l3.3 -2.1M851.4 427.3l3.6 -1.4M884.6 281.3l3.6 0.3M859.3 282.5l2.6 0.1M791.8 407.2l4.1 0.1M848.3 340.5l2.7 0.1M870.9 348.6l1.4 -0.7M867.1 347.2l2.6 -0.7M806.7 309.0l1.5 -1.3M837.3 271.7l2.8 -1.3M803.6 368.1l2.5 -0.4M855.7 445.1l3.2 -1.2M838.7 439.0l2.6 -0.3M883.5 348.4l3.1 -2.4M797.9 511.7l3.5 -0.7M820.8 504.4l3.3 -1.4M869.6 353.0l4.3 0.3M883.7 316.9l3.3 -0.3M876.4 381.9l2.9 -1.4M785.9 402.9l2.3 -0.1M788.7 395.3l2.7 -0.4M799.5 296.7l3.0 -0.4M840.4 459.0l4.1 1.2M776.4 447.7l1.8 0.5M825.0 293.0l3.9 0.1M783.8 344.8l2.9 -1.5M882.8 450.6l1.7 -0.8M787.9 365.2l3.0 -0.3M774.3 504.5l4.0 -1.2M788.2 412.0l2.7 -1.9M787.8 475.2l1.8 -0.6M872.5 302.7l2.7 0.2M799.4 510.5l2.8 -1.6M812.4 395.9l2.2 -0.7M849.1 393.9l2.0 0.5M768.3 446.3l4.0 0.8M773.8 467.1l1.7 -1.2M784.9 517.2l3.6 0.0M819.0 316.7l1.4 -1.1M800.0 421.6l3.0 -0.4M832.1 429.9l2.4 0.6M881.9 356.6l2.9 -0.0M807.7 290.8l4.0 0.2M765.6 311.9l4.2 -1.5M775.5 372.6l2.2 -1.3M850.9 356.9l2.6 -2.3M863.4 466.7l1.6 -0.5M820.1 288.5l3.3 0.2M842.1 421.0l4.1 -0.9M860.3 274.6l3.6 0.6M825.6 392.3l2.4 -0.9M823.0 433.8l2.9 -1.8M841.1 487.8l2.1 -0.9M826.9 440.9l2.3 0.1M832.6 325.5l3.9 -1.3M836.0 470.7l3.7 -2.1M837.3 390.1l1.8 0.5M829.7 276.2l3.8 -0.2M857.9 397.6l1.8 -0.7M845.0 421.4l2.4 -1.8M780.2 445.2l3.3 0.8M792.0 367.4l2.6 0.5M808.1 510.4l2.5 0.3M833.7 443.1l2.0 -1.5M779.5 274.5l3.6 0.7M769.9 469.0l2.0 -0.4M802.3 365.6l4.2 -1.4M876.7 323.6l3.7 0.5M813.1 386.2l3.6 -2.0M856.0 362.6l4.1 1.0M799.0 423.3l1.9 -0.8M848.4 527.2l1.7 -0.4M855.8 481.1l1.6 -0.6M864.5 437.3l4.3 -0.0M872.7 371.8l2.2 -0.8M851.3 355.5l3.8 -1.8M878.3 418.0l4.1 0.4M782.3 474.6l2.2 -0.9M798.1 293.5l2.5 0.3M813.9 518.1l2.9 -1.7M812.6 406.9l2.6 -0.2M878.4 279.9l1.9 -0.8M871.3 428.5l3.0 -1.5M861.5 398.5l3.9 1.2M825.1 353.3l4.1 -1.8M845.8 323.0l3.4 -0.8M862.4 338.3l3.0 -2.3M798.7 361.2l1.7 -1.2M862.7 468.5l2.1 0.2M864.3 329.6l1.9 0.1M841.6 479.1l3.8 -0.4M769.4 338.1l3.3 -1.5M809.7 398.8l3.1 0.3M813.2 517.1l1.8 0.6M872.2 429.8l2.2 -1.2M772.8 371.9l1.6 -0.0M848.2 267.0l3.7 -1.0M789.5 452.5l2.0 -1.3M866.5 397.1l3.3 -2.8M859.7 507.5l3.9 -1.3M813.9 303.3l1.6 0.0M807.4 393.7l3.6 -0.9M800.0 397.0l4.3 -0.6M868.5 315.1l2.8 -1.3M766.0 554.1l2.7 -2.3M885.2 262.8l2.1 -1.5M768.7 523.6l2.2 -1.3M852.9 491.9l4.2 -1.4M773.8 482.8l3.5 -2.7M883.4 511.5l2.8 0.6M807.8 300.2l1.7 -1.4M790.2 513.3l2.0 0.4M840.2 358.3l2.6 -1.8M878.4 278.7l3.0 -0.5M846.9 304.9l3.3 0.2M885.9 306.3l2.4 -0.6M838.0 287.4l1.5 -1.1M775.3 514.9l4.2 -0.3M820.1 350.8l3.5 -0.1M849.1 280.6l1.8 -0.8M805.3 527.7l3.6 -2.5M813.9 288.0l2.3 -0.8M878.8 310.1l1.8 0.5M855.7 340.8l3.5 0.9M857.4 344.4l2.9 -1.1M791.3 418.6l4.4 0.0M795.2 289.7l3.0 -1.8M826.7 322.3l3.8 -0.6M861.6 332.8l2.8 -1.3M838.0 431.9l2.4 -1.0M806.3 441.3l4.1 -1.4M787.1 501.0l3.8 0.6M843.1 461.3l3.5 -1.1M837.6 421.1l2.2 -1.9M783.0 549.5l2.6 0.8M864.0 427.2l1.5 -1.2M830.5 495.7l4.0 0.8M816.4 330.9l3.4 -2.1M880.1 389.6l2.8 -0.1M855.3 371.1l1.5 -0.5M835.5 288.4l2.5 0.5M884.3 277.0l2.9 -1.6M793.9 413.8l4.1 1.0M781.1 299.1l1.7 -0.8M871.8 296.6l1.4 -0.7M821.3 304.9l3.7 -0.2M781.2 443.4l1.5 -0.7M780.6 297.2l2.6 -2.0M814.3 351.5l3.2 0.1M853.5 284.5l1.4 -0.6M853.8 391.1l2.3 -1.4M823.9 324.5l3.3 -2.2" stroke="#ffffff" stroke-width="0.6" opacity="0.8" fill="none"/><path d="M871.1 259.0l2.2 2.3M778.3 273.8l1.7 3.5M794.6 286.5l2.4 1.9M820.8 267.5l1.1 2.3M851.4 282.6l2.3 1.6M807.8 280.9l0.3 3.8M873.7 295.5l0.6 1.4M853.1 292.7l0.0 2.8M787.5 273.9l1.7 1.7M795.0 290.1l-0.2 4.0M839.7 292.7l0.0 2.8M815.1 263.4l2.7 2.9M810.3 268.7l0.2 3.3M778.2 280.0l2.3 2.0M801.5 287.6l1.0 2.7M857.5 293.7l1.8 3.1M790.4 296.4l2.7 2.2M816.6 254.0l2.0 1.8M791.5 274.3l-0.3 3.8M871.0 272.1l1.1 1.2M837.0 269.3l0.6 2.4M806.1 280.4l0.0 2.9M858.8 249.4l1.7 3.7M777.3 288.1l0.8 1.5M844.7 298.1l1.0 1.6M833.4 251.3l-0.2 3.4M827.1 253.1l0.8 1.3M789.0 273.0l1.8 2.3M849.9 250.5l-0.1 3.4M835.6 250.6l-0.1 2.6M801.3 284.1l0.9 1.9M785.9 291.6l0.5 4.4M849.9 270.8l-0.0 1.7M824.2 291.5l1.5 3.6M860.5 263.9l-0.1 1.6M858.6 250.0l1.2 1.1M794.9 276.7l1.6 2.8M872.6 265.3l3.3 2.6M882.8 296.7l0.0 3.1M786.4 295.0l-0.1 2.6M794.0 251.7l1.1 1.9M812.9 265.9l0.3 2.7M793.0 279.0l0.8 1.6M825.3 263.0l2.7 3.2M884.9 273.1l0.1 2.8M869.3 274.5l1.5 2.0M874.1 291.2l-0.1 4.3M801.7 249.9l0.8 3.2M811.4 260.4l0.8 3.8M790.5 265.4l1.4 1.9M857.8 249.3l2.2 3.2M782.9 269.4l-0.3 4.4M852.0 287.8l0.8 2.6M777.7 273.7l1.4 1.0M830.9 293.5l1.6 2.6M789.4 278.5l0.0 4.5M780.3 260.6l1.3 2.6M875.4 285.1l0.7 1.9M849.0 274.3l0.4 1.5M816.5 265.0l1.5 2.6M860.8 275.2l2.0 2.2M837.3 250.9l1.1 3.0M845.6 282.8l0.3 1.7M809.2 261.6l1.2 4.0M814.2 288.5l1.8 1.3M834.1 292.8l0.8 4.1M881.0 262.4l-0.0 2.0M837.5 259.3l1.8 1.6M851.3 283.7l1.8 1.8M881.0 277.5l0.5 4.5M787.6 250.6l0.4 3.9M809.3 289.2l0.6 2.4M850.2 288.0l1.3 2.8M795.6 252.5l3.0 2.4M883.9 289.1l0.2 2.9M786.2 294.2l1.2 3.0M854.4 260.0l-0.1 3.2M841.4 265.2l1.5 4.1M793.1 259.1l0.8 3.5M828.7 286.7l0.8 1.9M808.4 264.8l1.1 1.6M873.9 266.4l1.3 1.3M826.9 252.6l0.9 1.7M825.9 254.9l2.8 3.3M780.0 273.5l0.4 3.8M790.1 263.6l1.3 3.4M875.4 276.4l1.2 1.1M836.7 292.4l2.3 2.8M856.6 249.0l2.0 2.2M799.7 254.4l0.5 1.9M842.0 299.1l1.8 1.3M785.8 271.9l0.5 3.7M809.1 264.8l1.2 2.9M783.3 293.7l0.4 3.7M782.8 276.2l3.1 2.9M794.3 253.7l1.2 2.7M823.2 285.1l1.0 2.6M871.1 259.7l0.7 1.6M861.3 258.4l1.3 3.4M783.3 252.9l1.4 3.0M796.5 265.3l-0.1 3.4M793.5 280.0l1.0 1.2M776.1 289.0l-0.1 2.2M853.9 286.8l3.1 3.1M871.5 251.0l2.4 2.8M816.1 255.3l3.3 2.5M878.1 270.7l0.6 3.5M883.5 263.3l1.5 3.0M878.0 294.3l0.4 3.1M811.7 296.8l0.8 4.3M805.5 272.0l1.3 2.5M871.9 272.9l0.6 3.0M873.2 289.8l2.7 3.6M868.9 288.5l0.7 2.7M789.4 253.6l1.9 2.8M870.7 267.4l0.7 3.2M872.6 294.8l3.0 2.2M805.9 296.3l2.0 1.6M778.4 280.2l1.4 1.1M837.2 256.5l3.4 2.4M867.0 273.3l0.2 3.3M869.7 254.2l2.8 2.1M807.5 277.1l0.5 3.0M806.7 296.2l1.5 2.4M831.4 250.2l1.3 3.1M792.6 283.2l2.0 3.8M816.7 253.1l-0.0 2.3M879.5 281.9l1.7 2.5M862.1 293.0l1.7 1.6M784.6 274.9l1.5 1.8M846.3 297.4l2.1 2.3M821.3 277.6l1.2 1.7M806.2 293.8l1.9 3.9M777.0 258.6l-0.0 1.8M838.0 257.8l2.1 2.0M870.0 277.4l1.7 1.3M883.6 288.1l1.0 2.3M808.5 250.3l2.7 3.0M815.3 290.8l-0.1 3.5M806.2 271.1l1.6 1.5M813.3 250.4l0.2 3.0M813.3 280.2l1.1 2.2M816.5 271.1l1.6 2.1M826.0 291.0l0.5 4.1M825.0 296.4l3.2 2.5M848.7 250.1l0.2 2.5M841.4 251.1l1.0 3.3M813.6 264.6l0.5 4.2M774.8 263.8l1.0 2.2M810.9 276.3l0.3 3.9M817.7 292.6l-0.1 1.9M794.3 298.0l1.7 1.5M883.7 289.8l1.9 2.0M884.3 261.5l0.3 2.2M821.4 295.6l0.7 2.7M881.0 293.3l-0.1 3.1M787.7 265.0l1.6 1.7M791.7 282.8l0.2 1.5M863.7 288.2l1.8 4.0M785.3 251.2l1.4 1.3M857.8 280.1l2.9 2.7M852.7 277.7l1.7 2.1M881.7 279.4l2.2 1.7M836.6 283.5l0.8 2.0M849.2 273.0l1.1 4.3M874.6 264.9l0.3 2.1M812.9 251.8l0.3 2.1M866.2 278.3l0.4 3.6M794.9 285.4l0.3 2.8M860.2 265.1l2.3 2.0M782.9 266.2l-0.0 4.1M856.3 268.7l2.2 2.1M784.4 287.6l0.2 1.7M809.1 275.0l1.9 3.0M778.7 286.7l0.6 2.1M782.7 255.7l2.1 2.0M791.6 249.9l0.9 1.4M777.5 289.6l0.7 2.2M805.8 269.2l1.7 2.9M793.3 278.3l1.2 3.9M864.2 287.6l0.6 1.6M873.2 281.3l0.8 2.4M784.6 254.2l0.0 2.9M818.1 293.8l1.1 2.2M818.5 273.1l1.1 3.5M779.0 285.5l0.9 4.2M813.8 255.0l-0.1 2.4M867.7 294.8l0.5 2.3M830.2 277.2l2.0 2.5M882.7 277.9l0.9 2.7M802.0 291.5l2.2 1.9M841.2 297.8l3.1 3.1M845.4 251.6l1.1 1.6M871.6 282.0l0.0 1.6M822.2 292.0l1.8 1.7M842.1 292.5l1.5 1.6M779.3 277.7l0.5 1.6M788.9 272.5l0.5 1.6M871.6 276.0l1.1 3.3M815.5 278.2l1.9 3.2" stroke="#ffffff" stroke-width="0.6" opacity="0.75" fill="none"/><path d="M703.4 314.0l1.6 -0.6M749.6 320.6l3.6 -1.0M691.0 306.8l2.4 -1.4M669.5 516.2l3.8 -2.1M723.9 360.4l3.1 -0.9M658.8 536.2l3.0 -2.0M702.7 519.0l1.5 -1.1M709.2 366.6l2.2 -1.1M734.4 439.4l2.9 -1.9M659.0 300.9l2.4 -1.2M699.4 363.1l3.3 -2.2M652.3 436.2l2.5 0.3M721.7 371.2l1.7 -0.1M758.5 544.8l3.4 0.9M695.2 460.6l4.1 0.5M700.6 387.0l2.0 -1.2M727.2 322.2l1.6 -0.1M735.6 358.2l3.9 -1.1M731.9 330.4l2.7 -0.1M762.1 360.1l2.9 -0.3M700.9 466.0l3.7 -1.1M716.5 367.0l3.0 -1.7M706.8 342.5l4.1 -1.2M691.3 377.0l1.7 -0.1M683.7 539.4l1.5 -1.2M682.6 358.6l2.3 -1.9M714.7 306.0l3.1 0.1M716.7 362.4l4.5 -0.3M751.0 397.4l2.0 -1.7M733.2 407.3l3.5 -0.3M692.8 356.6l2.9 0.1M703.6 389.0l3.3 -0.5M741.6 482.9l4.0 -0.6M734.1 502.4l3.5 -2.5M695.3 369.6l2.0 0.1M715.6 314.3l3.8 -0.1M729.7 438.6l2.1 0.2M697.4 445.8l3.9 -1.8M755.4 446.8l1.9 -1.6M729.5 436.5l3.2 0.1M737.8 522.9l2.9 0.8M731.3 516.3l3.9 -2.0M651.3 418.9l3.3 -2.5M730.8 314.6l3.3 -1.3M666.1 348.9l2.5 -1.1M700.9 364.1l3.9 -1.8M644.7 352.6l2.6 -1.5M718.9 425.7l2.9 0.7M652.4 331.1l1.8 -0.2M733.2 484.6l3.9 -2.0M759.9 393.9l2.4 -1.6M675.0 512.8l2.5 -1.7M690.1 513.3l1.8 -0.6M640.9 411.7l2.6 -0.9M730.6 390.3l1.8 -0.3M639.8 408.6l2.5 -0.0M757.4 320.1l1.8 -1.3M664.4 331.4l3.8 -2.3M678.4 529.6l2.8 0.6M735.4 494.5l3.2 -0.2M713.9 319.9l3.3 -0.2M748.7 500.2l3.3 -0.7M673.4 362.3l2.8 -1.8M675.1 358.0l4.2 0.1M654.6 556.0l2.6 -1.0M722.9 536.1l4.0 0.6M715.4 464.5l2.3 -2.1M646.0 536.1l3.1 -1.4M646.6 513.3l1.5 -0.9M676.3 476.5l2.4 -0.3M690.9 302.8l1.5 -0.9M758.0 350.0l3.4 -0.2M648.0 500.1l3.8 0.4M650.3 316.6l4.4 -0.2M729.5 304.7l1.8 -0.1M664.0 404.2l2.5 -0.0M671.3 493.6l2.4 -1.0M650.1 372.1l1.5 0.1M704.0 375.2l2.2 -0.1M699.0 469.2l1.9 0.5M702.3 461.2l1.4 -1.2M666.5 408.0l1.6 -1.4M693.5 506.1l4.0 1.1M650.6 324.4l3.0 -0.4M654.2 431.5l2.9 0.7M693.4 387.0l4.4 -0.3M711.8 389.9l3.1 -0.0M714.3 406.0l3.1 -2.2M677.7 317.4l2.0 -0.7M727.2 305.6l3.2 0.5" stroke="#ffffff" stroke-width="0.6" opacity="0.55" fill="none"/><path d="M767 318 L888 298" stroke="#a8b0c8" stroke-width="0.5" stroke-dasharray="2 2" opacity="0.45"/><path d="M767 356 L888 336" stroke="#a8b0c8" stroke-width="0.5" stroke-dasharray="2 2" opacity="0.45"/><path d="M767 394 L888 374" stroke="#a8b0c8" stroke-width="0.5" stroke-dasharray="2 2" opacity="0.45"/><path d="M767 432 L888 412" stroke="#a8b0c8" stroke-width="0.5" stroke-dasharray="2 2" opacity="0.45"/><path d="M767 470 L888 450" stroke="#a8b0c8" stroke-width="0.5" stroke-dasharray="2 2" opacity="0.45"/><path d="M767 508 L888 488" stroke="#a8b0c8" stroke-width="0.5" stroke-dasharray="2 2" opacity="0.45"/><ellipse cx="560" cy="320" rx="1.4" ry="2.1" transform="rotate(20 560 320)" fill="#8890aa"/><ellipse cx="561.5" cy="356.6" rx="1.4" ry="2.1" transform="rotate(20 561.5 356.6)" fill="#8890aa"/><ellipse cx="563" cy="392.6" rx="1.4" ry="2.1" transform="rotate(20 563 392.6)" fill="#8890aa"/><ellipse cx="564.7" cy="427" rx="1.4" ry="2.1" transform="rotate(20 564.7 427)" fill="#8890aa"/><ellipse cx="566.2" cy="461.2" rx="1.4" ry="2.1" transform="rotate(20 566.2 461.2)" fill="#8890aa"/><ellipse cx="567.3" cy="494.7" rx="1.4" ry="2.1" transform="rotate(20 567.3 494.7)" fill="#8890aa"/><path d="M577.6 317.0l1.6 -1.4M582.4 308.9l1.4 -1.7M598.5 315.9l2.2 -1.2M594.0 312.7l0.3 -2.7M578.8 309.3l1.4 -1.9M585.8 313.0l0.8 -2.4M593.2 314.6l1.0 0.3M594.9 317.3l1.5 -1.0M599.1 316.9l1.0 0.4M593.8 311.2l0.2 -2.6M596.4 317.5l1.9 -0.9M577.5 316.4l1.5 -2.2M577.4 309.6l1.1 -1.8M582.9 311.6l1.1 -0.7M588.0 306.9l1.7 -1.4M587.3 306.9l2.5 -1.3M583.6 309.5l2.6 0.4M595.0 313.1l0.5 -1.1M590.5 308.2l1.3 -0.2M585.9 315.2l1.6 -0.4M589.2 318.5l1.9 0.0M576.8 307.6l0.4 -1.0M592.1 316.3l0.3 -2.9M586.6 319.7l0.9 -2.1M597.7 316.9l1.6 -2.4M583.1 311.9l1.3 -0.8M597.0 313.4l0.3 -1.6M593.9 319.8l0.3 -2.5M595.4 306.6l2.5 -1.2M590.3 319.2l1.5 -0.1M596.2 313.7l0.4 -1.7M576.4 319.8l0.1 -2.8M578.9 307.2l2.1 -0.4M588.1 310.9l1.3 -1.3M596.8 313.4l2.0 0.5M583.1 308.5l2.1 -1.1M575.8 311.2l1.5 -0.3M598.6 313.9l1.4 0.0M595.8 311.8l0.5 -1.8M579.7 312.1l1.7 0.6" stroke="#9098b0" stroke-width="0.6" opacity="0.7" fill="none"/><rect x="590.0" y="308.5" width="3.8" height="9" fill="#8088a6"/><path d="M594.5 309.0 L599.0 313.0 L594.5 317.0Z" fill="#8a92ae" opacity="0.85"/><path d="M581.0 354.5l1.5 -1.6M595.8 347.7l0.6 -1.1M592.0 344.3l1.1 0.4M595.7 354.4l3.0 0.0M585.4 353.5l0.9 -0.3M589.4 353.5l0.9 -1.3M578.9 344.5l0.4 -1.0M576.4 348.4l2.1 -1.2M579.3 356.2l1.9 0.4M579.3 352.0l0.0 -1.3M590.4 348.0l2.1 0.8M592.5 355.8l1.6 -0.9M592.1 345.5l0.4 -1.1M594.9 353.5l1.0 -2.6M579.6 347.3l1.6 -2.0M590.1 357.5l2.6 -0.1M592.8 354.6l2.6 -1.3M593.6 351.0l1.9 -0.6M584.0 352.7l2.3 0.4M577.0 349.9l2.3 -1.9M583.9 348.0l0.1 -1.1M584.8 349.6l1.0 -0.4M599.2 356.1l0.7 -1.8M593.8 345.6l0.7 -1.3M589.0 353.8l1.7 0.2M577.0 345.3l0.8 -0.9M583.1 355.0l1.4 -0.9M585.7 354.7l2.1 1.1M578.0 354.7l1.8 0.5M579.2 352.8l2.9 0.4M596.1 348.1l1.0 -2.7M597.5 353.6l0.2 -1.2M589.6 357.0l2.1 -0.1M590.1 349.9l1.9 0.4M596.8 350.5l2.5 -1.6M592.7 350.7l0.0 -1.8M582.2 350.1l0.2 -1.8M585.0 355.8l1.5 -1.9M589.5 351.8l2.8 0.2M580.0 348.5l0.2 -2.2" stroke="#9098b0" stroke-width="0.6" opacity="0.7" fill="none"/><rect x="590.8" y="346.0" width="3.8" height="9" fill="#8088a6"/><path d="M595.3 346.5 L599.8 350.5 L595.3 354.5Z" fill="#8a92ae" opacity="0.85"/><path d="M609.4 343.0l1.7 0.6M613.4 343.0l2.0 0.2M615.2 350.6l0.3 -1.0M619.0 349.3l2.6 -0.0M615.4 342.0l1.0 -2.2M610.2 348.0l2.1 -1.9M618.5 345.1l0.5 -2.0M616.7 340.6l1.1 -0.7M612.9 348.6l1.1 0.4M612.5 345.4l2.6 1.1M618.0 341.7l2.4 0.0M609.5 345.1l1.2 -0.7M611.5 345.5l0.0 -1.7M614.6 343.7l2.5 -1.3M613.8 344.6l2.7 -0.4M609.7 349.3l2.7 0.9M611.3 351.2l1.1 -1.3M612.4 349.4l1.3 -0.3M612.1 346.6l2.2 0.4M616.5 343.3l2.2 0.5M616.1 343.5l1.5 -0.6M613.8 351.5l1.1 -0.8M613.8 342.6l1.4 -0.1M617.3 346.1l1.7 -1.4M621.0 347.7l0.7 -1.5" stroke="#9098b0" stroke-width="0.6" opacity="0.7" fill="none"/><rect x="616.6" y="341.3" width="3" height="9" fill="#8088a6"/><path d="M616.1 342.3 L611.6 345.8 L616.1 349.3Z" fill="#8a92ae" opacity="0.85"/><path d="M580.5 386.7l1.1 0.4M582.9 380.2l2.4 -1.2M580.5 390.3l1.5 -1.4M590.7 390.5l2.7 1.2M590.5 391.3l2.1 0.2M591.5 383.2l0.6 -1.8M583.0 377.8l1.3 0.5M600.3 385.8l0.9 -1.5M579.5 386.1l0.6 -0.8M582.2 383.6l1.4 0.5M596.9 384.8l1.2 -1.3M588.7 382.9l2.4 -0.7M598.3 384.1l1.2 -0.4M589.8 390.9l0.4 -1.1M577.0 382.3l1.5 -1.5M585.7 392.3l2.6 -1.0M582.8 381.7l0.9 -0.4M593.6 382.5l2.0 -0.2M596.4 380.3l2.7 1.1M587.4 387.1l0.0 -2.1M586.5 388.9l2.4 -0.0M600.6 379.1l1.5 -1.7M598.1 382.4l2.6 0.2M588.2 387.8l2.3 -0.0M597.3 378.7l1.1 0.2M590.6 383.6l2.4 -1.2M583.4 385.0l2.1 0.0M590.4 386.3l1.0 0.5M587.9 390.7l0.2 -2.5M585.0 380.5l2.4 0.1M593.7 388.5l3.0 -0.0M597.8 380.1l0.4 -2.3M584.9 382.4l1.4 0.5M586.5 391.7l2.2 -0.3M581.3 390.2l2.2 -1.9M585.4 384.3l2.2 -1.8M595.4 387.2l0.1 -1.3M585.1 388.8l1.1 -1.3M587.0 378.1l1.6 0.2M599.7 391.1l2.1 -0.7" stroke="#9098b0" stroke-width="0.6" opacity="0.7" fill="none"/><rect x="591.6" y="380.5" width="3.8" height="9" fill="#8088a6"/><path d="M596.1 381.0 L600.6 385.0 L596.1 389.0Z" fill="#8a92ae" opacity="0.85"/><path d="M617.8 374.2l1.9 1.1M615.7 382.9l2.5 -0.9M616.1 378.6l0.6 -1.5M613.8 378.3l2.0 -0.9M612.8 379.8l3.0 -0.4M611.3 374.9l2.5 -0.3M619.0 378.9l0.3 -1.7M619.3 376.8l1.7 -0.3M620.3 374.4l1.5 -0.5M617.8 381.4l2.3 -1.9M614.9 382.0l1.6 -0.4M616.4 384.9l1.6 0.9M617.5 382.9l0.3 -1.5M616.0 385.3l2.1 -1.6M616.3 383.7l1.5 0.6M613.8 374.4l2.0 0.2M619.6 375.9l2.2 -1.6M611.4 380.1l2.5 0.7M612.0 379.9l1.3 -1.3M609.9 385.4l2.5 -1.1M617.8 375.3l0.9 -1.0M613.3 383.2l1.0 0.1M619.3 375.8l0.1 -2.8M610.8 381.3l1.1 0.1M618.8 377.9l2.5 0.5" stroke="#9098b0" stroke-width="0.6" opacity="0.7" fill="none"/><rect x="617.2" y="375.5" width="3" height="9" fill="#8088a6"/><path d="M616.7 376.5 L612.2 380.0 L616.7 383.5Z" fill="#8a92ae" opacity="0.85"/><path d="M589.4 420.4l0.9 -0.7M592.5 421.1l0.3 -1.9M583.6 417.2l1.5 -0.4M585.4 412.0l2.6 -0.2M601.6 418.6l1.3 -1.2M593.1 420.5l0.3 -1.9M599.1 416.3l2.8 -0.8M580.6 425.6l1.3 -1.5M584.9 416.2l1.9 -1.4M591.1 412.8l1.9 -0.1M579.2 416.3l2.2 0.9M600.2 416.2l0.3 -1.1M583.3 425.2l0.2 -2.4M578.1 411.0l2.3 1.1M599.1 416.5l0.8 -2.5M595.6 415.2l2.2 -0.2M579.1 426.2l0.8 -2.1M585.2 418.2l1.3 0.1M584.3 418.4l1.4 -1.8M597.9 423.3l2.0 -0.5M593.6 415.6l1.3 -0.1M599.7 422.2l1.9 -0.0M592.2 418.0l1.1 -0.2M590.0 417.1l1.1 0.3M598.5 424.4l1.4 0.7M584.4 413.6l2.4 0.2M583.2 422.4l1.3 -2.2M578.8 424.7l2.1 -1.8M589.6 413.2l2.4 0.1M578.8 414.4l0.5 -1.7M590.7 419.4l1.8 0.7M590.1 420.6l2.6 1.2M591.0 417.5l0.3 -1.3M582.6 418.2l1.2 -0.4M589.6 423.4l2.6 0.8M597.8 418.4l1.0 -0.6M601.6 418.8l0.1 -2.7M596.0 421.3l0.5 -1.0M591.3 415.0l2.2 -1.0M585.8 422.6l2.9 0.8" stroke="#9098b0" stroke-width="0.6" opacity="0.7" fill="none"/><rect x="592.4" y="414.0" width="3.8" height="9" fill="#8088a6"/><path d="M596.9 414.5 L601.4 418.5 L596.9 422.5Z" fill="#8a92ae" opacity="0.85"/><path d="M610.4 412.8l1.7 -0.0M618.3 409.4l2.6 -1.5M614.8 408.2l1.2 -0.5M615.9 417.1l2.2 1.1M618.1 412.3l2.0 -0.4M615.2 411.3l0.9 -0.6M618.8 415.2l1.6 -1.9M619.1 413.0l1.1 -0.5M610.6 417.8l1.4 -2.0M615.1 416.1l1.1 0.3M612.5 412.9l0.2 -1.0M614.5 407.6l2.5 1.0M610.5 414.4l1.2 -0.1M610.5 409.6l1.2 0.0M611.8 416.2l1.7 -1.2M611.3 409.1l1.5 -1.4M614.5 417.0l2.4 -0.1M618.0 411.3l1.4 -0.5M620.5 412.0l2.4 -0.7M619.4 409.4l0.1 -1.6M616.5 411.8l1.3 -2.1M611.9 409.7l1.0 -0.7M620.0 414.0l1.5 0.5M616.1 412.7l1.8 0.3M618.0 418.9l0.9 -0.7" stroke="#9098b0" stroke-width="0.6" opacity="0.7" fill="none"/><rect x="617.8" y="408.5" width="3" height="9" fill="#8088a6"/><path d="M617.3 409.5 L612.8 413.0 L617.3 416.5Z" fill="#8a92ae" opacity="0.85"/><path d="M594.6 449.0l2.9 -0.6M600.6 448.4l0.5 -2.8M586.9 449.3l1.3 -0.7M591.8 448.1l2.8 0.2M598.7 459.0l0.8 -1.5M588.8 446.3l1.2 -0.6M599.5 447.9l0.7 -1.2M595.8 453.0l1.3 -1.7M592.7 458.4l0.5 -2.0M584.1 446.9l2.4 1.0M584.5 456.9l0.5 -1.3M584.3 457.9l2.4 0.7M585.4 457.6l1.3 -0.3M600.8 450.6l1.0 0.2M600.6 448.3l2.1 0.5M578.5 451.4l2.3 -1.6M594.9 447.2l2.2 -2.0M595.9 452.5l1.5 -2.4M581.7 451.2l1.8 -1.2M598.2 455.8l2.4 -0.9M596.9 450.7l0.6 -2.8M595.8 448.3l1.7 -0.8M586.1 446.7l1.5 -0.1M580.0 451.5l1.7 -2.1M583.2 445.2l1.8 0.8M585.1 457.0l1.5 -1.0M591.0 455.1l0.0 -2.9M589.0 453.3l2.3 0.3M579.0 455.4l1.3 -1.5M597.7 447.0l0.4 -1.4M601.8 453.5l2.3 -1.0M601.1 460.1l1.4 -2.6M603.1 452.3l0.0 -2.4M582.8 446.4l2.5 -1.4M580.3 452.3l2.0 0.4M601.4 458.5l0.3 -1.4M595.6 447.9l2.0 -1.1M579.8 449.8l2.9 0.8M590.9 446.7l0.3 -1.1M594.5 456.1l1.7 -1.5" stroke="#9098b0" stroke-width="0.6" opacity="0.7" fill="none"/><rect x="593.2" y="447.5" width="3.8" height="9" fill="#8088a6"/><path d="M597.7 448.0 L602.2 452.0 L597.7 456.0Z" fill="#8a92ae" opacity="0.85"/><path d="M622.4 444.3l1.9 -0.9M613.2 442.7l2.0 0.2M621.8 445.3l1.7 -1.7M619.8 447.1l2.1 1.1M616.0 444.2l1.9 0.8M618.8 441.0l1.8 -0.9M620.8 443.9l2.2 -0.7M620.1 449.2l1.2 -0.7M614.0 448.7l0.0 -2.3M620.5 443.2l1.4 -0.3M622.2 448.4l1.4 0.6M610.5 448.3l2.6 0.7M621.5 443.5l2.2 -2.0M618.0 452.5l1.0 -0.9M618.4 449.4l2.5 0.1M622.5 451.8l1.7 -0.2M616.5 442.0l1.3 -1.1M615.5 451.2l0.3 -1.8M614.6 444.6l2.1 -0.3M620.6 449.7l2.8 0.1M622.3 448.3l0.7 -1.3M618.3 449.5l1.2 -2.7M617.7 441.6l1.2 -1.9M613.4 448.3l2.7 -1.1M610.9 441.9l1.5 -2.2" stroke="#9098b0" stroke-width="0.6" opacity="0.7" fill="none"/><rect x="618.4" y="442.0" width="3" height="9" fill="#8088a6"/><path d="M617.9 443.0 L613.4 446.5 L617.9 450.0Z" fill="#8a92ae" opacity="0.85"/><path d="M587.5 484.0l2.9 0.6M598.8 491.1l1.7 -0.8M589.1 480.1l0.8 -0.6M591.3 485.3l0.1 -2.1M587.6 486.5l2.7 0.8M587.6 485.9l2.7 1.3M586.1 483.7l1.0 -2.8M591.2 481.4l2.7 0.7M585.9 487.6l1.9 -1.9M602.3 491.7l0.6 -0.9M583.9 486.1l2.0 0.0M600.1 484.0l1.7 -0.9M599.2 487.0l1.4 -1.0M602.9 486.2l0.2 -2.8M602.9 489.6l1.6 -1.7M582.4 481.2l1.0 -1.1M591.2 488.7l1.7 -0.6M599.8 484.7l0.9 -2.6M591.3 479.7l1.1 -0.2M598.2 484.9l2.4 -0.9M595.1 492.4l0.9 -1.1M597.7 492.0l1.3 -0.3M592.2 482.5l2.3 -1.6M584.7 492.4l2.2 -0.5M583.0 484.0l2.2 0.7M601.1 489.1l1.5 0.5M586.3 481.5l0.6 -2.3M589.0 481.8l0.9 -1.2M588.2 485.8l1.8 0.9M602.4 489.7l1.9 -0.8M583.2 486.5l0.6 -0.8M588.3 479.9l1.7 -1.0M582.5 491.8l1.3 -1.0M594.2 480.6l1.7 -1.3M583.1 481.6l0.9 -2.6M594.2 491.0l2.0 -0.7M590.2 483.4l1.2 -0.7M602.2 486.2l1.2 -2.4M600.5 480.7l2.7 0.8M592.9 484.3l0.1 -2.3" stroke="#9098b0" stroke-width="0.6" opacity="0.7" fill="none"/><rect x="594.0" y="481.0" width="3.8" height="9" fill="#8088a6"/><path d="M598.5 481.5 L603.0 485.5 L598.5 489.5Z" fill="#8a92ae" opacity="0.85"/><path d="M617.1 485.0l2.7 -0.5M619.5 482.0l1.6 0.7M623.2 482.2l1.3 -2.3M620.6 477.4l1.1 -0.7M620.4 482.9l1.5 -0.2M613.0 481.0l1.2 -0.9M622.0 482.4l1.8 -1.6M614.1 484.2l0.6 -2.1M618.4 478.0l2.7 1.3M619.0 477.6l1.2 -2.3M615.7 479.0l1.5 -0.8M612.8 478.4l1.2 -1.2M611.9 483.3l1.2 0.4M619.5 482.4l2.6 0.1M615.3 477.9l2.4 0.4M616.8 479.6l1.2 -0.4M612.4 481.4l2.4 -0.8M612.8 484.2l0.2 -1.6M611.0 476.3l2.4 -0.5M621.9 484.2l1.4 0.4M617.7 476.3l1.5 -0.3M621.6 483.5l2.9 0.2M614.1 485.4l2.5 -0.9M620.3 482.1l0.3 -2.8M618.9 476.9l1.5 -0.9" stroke="#9098b0" stroke-width="0.6" opacity="0.7" fill="none"/><rect x="619.0" y="475.5" width="3" height="9" fill="#8088a6"/><path d="M618.5 476.5 L614.0 480.0 L618.5 483.5Z" fill="#8a92ae" opacity="0.85"/><path d="M602.5 304 V319" stroke="#9aa0b8" stroke-width="0.7" stroke-dasharray="3 1.5"/><path d="M602.5 341.5 V356.5" stroke="#9aa0b8" stroke-width="0.7" stroke-dasharray="3 1.5"/><path d="M602.5 376 V391" stroke="#9aa0b8" stroke-width="0.7" stroke-dasharray="3 1.5"/><path d="M602.5 409.5 V424.5" stroke="#9aa0b8" stroke-width="0.7" stroke-dasharray="3 1.5"/><path d="M602.5 443 V458" stroke="#9aa0b8" stroke-width="0.7" stroke-dasharray="3 1.5"/><path d="M602.5 476.5 V491.5" stroke="#9aa0b8" stroke-width="0.7" stroke-dasharray="3 1.5"/><path d="M518.5 290 L526 530" stroke="#b8bccb" stroke-width="1" opacity="0.6"/></svg></body></html>
